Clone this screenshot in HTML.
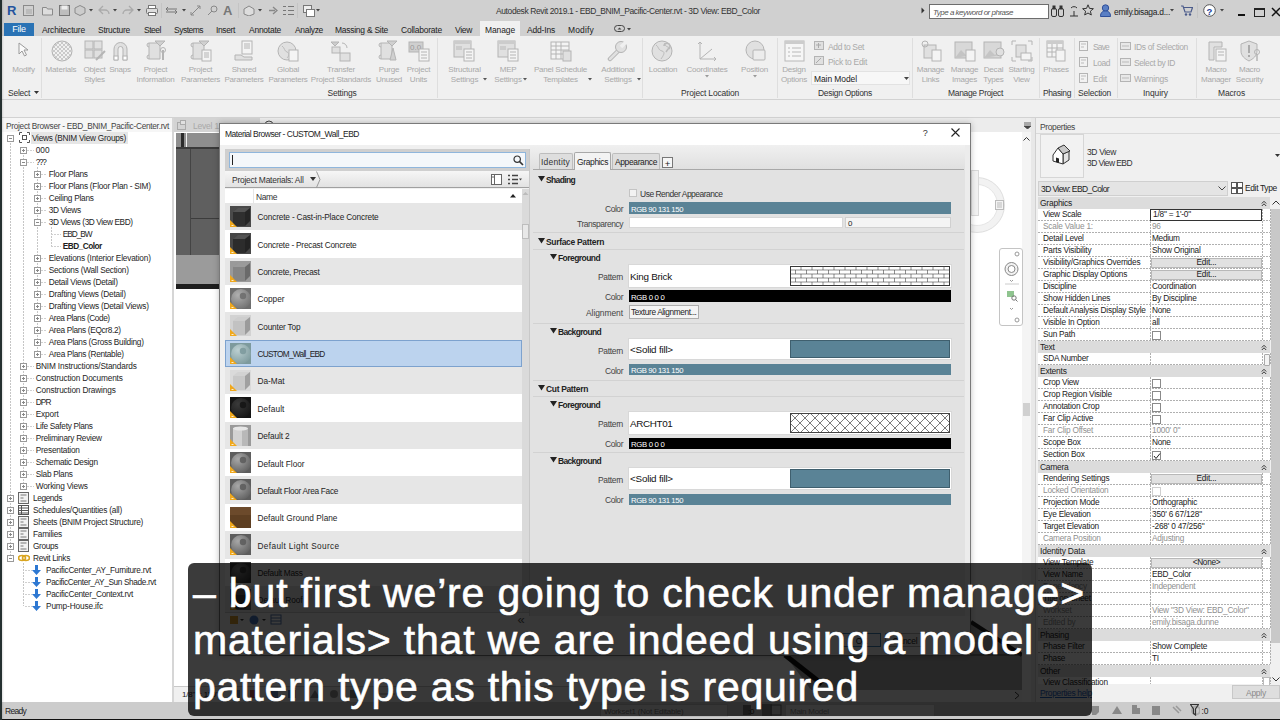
<!DOCTYPE html>
<html><head><meta charset="utf-8">
<style>
*{margin:0;padding:0;box-sizing:border-box}
html,body{width:1280px;height:720px;overflow:hidden;background:#f0f0f0;font-family:"Liberation Sans",sans-serif;font-size:8px;color:#222;position:relative}
.a{position:absolute}
.t{position:absolute;white-space:nowrap}
</style></head><body>
<div class="a" style="left:0px;top:0px;width:1280px;height:720px;background:#f0f0f0;"></div>
<div class="a" style="left:0px;top:0px;width:1280px;height:36px;background:#d0d0d0;"></div>
<div class="a" style="left:0px;top:36px;width:1280px;height:63px;background:#f0f0f0;"></div>
<div class="a" style="left:0px;top:99px;width:1280px;height:1px;background:#d2d2d2;"></div>
<div class="a" style="left:0px;top:100px;width:1280px;height:18px;background:#f0f0f0;"></div>
<div class="t" style="left:7.00px;top:2.40px;line-height:18px;font-size:13px;color:#24539e;font-weight:bold;">R</div>
<svg class="a" style="left:23px;top:5px;" width="11" height="11" viewBox="0 0 11 11"><rect x="0.5" y="0.5" width="10" height="10" fill="none" stroke="#8a8a8a"/><rect x="3" y="4" width="6" height="5" fill="#bbb"/></svg>
<svg class="a" style="left:42px;top:5px;" width="12" height="11" viewBox="0 0 12 11"><path d="M0.5 2.5h4l1 1.5h5v6h-10z" fill="#ddd" stroke="#8a8a8a"/></svg>
<svg class="a" style="left:59px;top:5px;" width="11" height="11" viewBox="0 0 11 11"><rect x="0.5" y="0.5" width="10" height="10" fill="#bdbdbd" stroke="#777"/><rect x="2.5" y="0.5" width="6" height="4" fill="#eee"/></svg>
<svg class="a" style="left:74px;top:5px;" width="12" height="11" viewBox="0 0 12 11"><path d="M1 3l5-2.5 5 2.5v5l-5 2.5-5-2.5z" fill="#ccc" stroke="#8a8a8a"/></svg>
<svg class="a" style="left:98px;top:5px;" width="12" height="11" viewBox="0 0 12 11"><path d="M5 1L1 5l4 4M1 5h6a4 4 0 0 1 4 4" fill="none" stroke="#aaa" stroke-width="1.3"/></svg>
<svg class="a" style="left:122px;top:5px;" width="12" height="11" viewBox="0 0 12 11"><path d="M7 1l4 4-4 4M11 5H5a4 4 0 0 0-4 4" fill="none" stroke="#aaa" stroke-width="1.3"/></svg>
<svg class="a" style="left:146px;top:5px;" width="12" height="11" viewBox="0 0 12 11"><rect x="0.5" y="3.5" width="11" height="5" rx="1" fill="#ddd" stroke="#777"/><rect x="2.5" y="0.5" width="7" height="3" fill="#fff" stroke="#777"/><rect x="2.5" y="7.5" width="7" height="3" fill="#fff" stroke="#777"/></svg>
<svg class="a" style="left:166px;top:5px;" width="12" height="11" viewBox="0 0 12 11"><path d="M0 4h11M0 7h11M2 2l-2 2 2 2M9 5l2 2-2 2" fill="none" stroke="#777"/></svg>
<svg class="a" style="left:190px;top:5px;" width="11" height="11" viewBox="0 0 11 11"><path d="M1 10L10 1M1 7v3h3M7 1h3v3" fill="none" stroke="#888"/></svg>
<svg class="a" style="left:207px;top:5px;" width="11" height="11" viewBox="0 0 11 11"><circle cx="7" cy="4" r="3" fill="none" stroke="#888"/><path d="M1 10l4-4" stroke="#888"/></svg>
<div class="t" style="left:223.00px;top:2.40px;line-height:18px;font-size:13px;color:#777;font-weight:bold;">A</div>
<svg class="a" style="left:243px;top:5px;" width="12" height="11" viewBox="0 0 12 11"><path d="M1 4l5-3 5 3v5l-5 2-5-2z" fill="#ddd" stroke="#888"/></svg>
<svg class="a" style="left:268px;top:5px;" width="11" height="11" viewBox="0 0 11 11"><path d="M1 5.5h6M5 2l4 3.5-4 3.5" fill="none" stroke="#888" stroke-width="1.3"/></svg>
<svg class="a" style="left:283px;top:5px;" width="11" height="11" viewBox="0 0 11 11"><path d="M0 1.5h3M5 1.5h6M0 5.5h3M5 5.5h6M0 9.5h3M5 9.5h6" stroke="#777"/></svg>
<svg class="a" style="left:303px;top:5px;" width="12" height="12" viewBox="0 0 12 12"><rect x="0.5" y="0.5" width="8" height="7" fill="#eee" stroke="#777"/><rect x="3.5" y="4.5" width="8" height="7" fill="#fff" stroke="#777"/></svg>
<svg class="a" style="left:89px;top:9px;" width="5" height="3" viewBox="0 0 5 3"><path d="M0 0h4l-2 2.5z" fill="#444"/></svg>
<svg class="a" style="left:113px;top:9px;" width="5" height="3" viewBox="0 0 5 3"><path d="M0 0h4l-2 2.5z" fill="#444"/></svg>
<svg class="a" style="left:137px;top:9px;" width="5" height="3" viewBox="0 0 5 3"><path d="M0 0h4l-2 2.5z" fill="#444"/></svg>
<svg class="a" style="left:182px;top:9px;" width="5" height="3" viewBox="0 0 5 3"><path d="M0 0h4l-2 2.5z" fill="#444"/></svg>
<svg class="a" style="left:258px;top:9px;" width="5" height="3" viewBox="0 0 5 3"><path d="M0 0h4l-2 2.5z" fill="#444"/></svg>
<svg class="a" style="left:316px;top:9px;" width="5" height="3" viewBox="0 0 5 3"><path d="M0 0h4l-2 2.5z" fill="#444"/></svg>
<div class="a" style="left:161px;top:3px;width:1px;height:15px;background:#c4c4c4;"></div>
<div class="a" style="left:238px;top:3px;width:1px;height:15px;background:#c4c4c4;"></div>
<div class="a" style="left:297px;top:3px;width:1px;height:15px;background:#c4c4c4;"></div>
<div class="t" style="left:496.00px;top:4.90px;line-height:12px;font-size:8.48px;color:#333;letter-spacing:-0.378px;">Autodesk Revit 2019.1 - EBD_BNIM_Pacific-Center.rvt - 3D View: EBD_Color</div>
<svg class="a" style="left:921px;top:7px;" width="5" height="7" viewBox="0 0 5 7"><path d="M0.5 0.5l3 3-3 3z" fill="#333"/></svg>
<div class="a" style="left:929px;top:4px;width:120px;height:15px;background:#fff;border:1px solid #6d6d6d;"></div>
<div class="t" style="left:933.00px;top:6.90px;line-height:11px;font-size:7.95px;color:#555;font-style:italic;letter-spacing:-0.466px;">Type a keyword or phrase</div>
<svg class="a" style="left:1051px;top:5px;" width="13" height="12" viewBox="0 0 13 12"><rect x="0.5" y="3.5" width="5" height="8" rx="1.5" fill="none" stroke="#333"/><rect x="7.5" y="3.5" width="5" height="8" rx="1.5" fill="none" stroke="#333"/><rect x="1.5" y="0.5" width="3" height="4" fill="#333"/><rect x="8.5" y="0.5" width="3" height="4" fill="#333"/></svg>
<svg class="a" style="left:1069px;top:5px;" width="10" height="12" viewBox="0 0 10 12"><path d="M1 11h8M5 11V6M2 3a4 4 0 0 1 6 0" fill="none" stroke="#333"/></svg>
<svg class="a" style="left:1082px;top:4px;" width="12" height="12" viewBox="0 0 12 12"><path d="M6 0.8l1.5 3.6 3.9.3-3 2.5.9 3.8L6 9 2.7 11l.9-3.8-3-2.5 3.9-.3z" fill="none" stroke="#333"/></svg>
<svg class="a" style="left:1100px;top:4px;" width="11" height="13" viewBox="0 0 11 13"><circle cx="5.5" cy="4" r="3.2" fill="#5a7fc4" stroke="#2e4f9a"/><path d="M0.5 12.5c0-4 2-5.5 5-5.5s5 1.5 5 5.5z" fill="#5a7fc4" stroke="#2e4f9a"/></svg>
<div class="t" style="left:1114.00px;top:5.90px;line-height:12px;font-size:8.48px;color:#222;letter-spacing:-0.268px;">emily.bisaga.d...</div>
<svg class="a" style="left:1170px;top:9px;" width="5" height="3" viewBox="0 0 5 3"><path d="M0 0h4l-2 2.5z" fill="#444"/></svg>
<svg class="a" style="left:1181px;top:5px;" width="12" height="12" viewBox="0 0 12 12"><path d="M0 1h2l2 6h6l1.5-4.5H3" fill="none" stroke="#4a5a8a" stroke-width="1.2"/><circle cx="5" cy="9.5" r="1.2" fill="#4a5a8a"/><circle cx="9" cy="9.5" r="1.2" fill="#4a5a8a"/></svg>
<div class="a" style="left:1197px;top:3px;width:1px;height:15px;background:#c4c4c4;"></div>
<svg class="a" style="left:1203px;top:4px;" width="13" height="13" viewBox="0 0 13 13"><circle cx="6.5" cy="6.5" r="5.8" fill="#fff" stroke="#555" stroke-width="1"/></svg>
<div class="t" style="left:1206.50px;top:5.20px;line-height:13px;font-size:9.54px;color:#1a3f9a;font-weight:bold;">?</div>
<svg class="a" style="left:1220px;top:9px;" width="5" height="3" viewBox="0 0 5 3"><path d="M0 0h4l-2 2.5z" fill="#444"/></svg>
<div class="a" style="left:1238px;top:14px;width:7px;height:2px;background:#111;"></div>
<div class="a" style="left:1254px;top:8px;width:11px;height:9px;border:1.5px solid #222;border-top-width:2px;"></div>
<svg class="a" style="left:1271px;top:7px;" width="10" height="10" viewBox="0 0 10 10"><path d="M1 1l8 8M9 1l-8 8" stroke="#111" stroke-width="1.5"/></svg>
<div class="a" style="left:4px;top:23px;width:30px;height:13px;background:#2a73b5;"></div>
<div class="t" style="left:12.15px;top:23.40px;line-height:13px;font-size:9.01px;color:#fff;letter-spacing:-0.201px;">File</div>
<div class="a" style="left:480px;top:21px;width:40px;height:15px;background:#f0f0f0;"></div>
<div class="t" style="left:42.00px;top:23.70px;line-height:12px;font-size:8.48px;color:#222;letter-spacing:-0.182px;">Architecture</div>
<div class="t" style="left:98.00px;top:23.70px;line-height:12px;font-size:8.48px;color:#222;letter-spacing:-0.262px;">Structure</div>
<div class="t" style="left:144.00px;top:23.70px;line-height:12px;font-size:8.48px;color:#222;letter-spacing:-0.461px;">Steel</div>
<div class="t" style="left:174.00px;top:23.70px;line-height:12px;font-size:8.48px;color:#222;letter-spacing:-0.496px;">Systems</div>
<div class="t" style="left:216.00px;top:23.70px;line-height:12px;font-size:8.48px;color:#222;letter-spacing:-0.363px;">Insert</div>
<div class="t" style="left:249.00px;top:23.70px;line-height:12px;font-size:8.48px;color:#222;letter-spacing:-0.238px;">Annotate</div>
<div class="t" style="left:295.00px;top:23.70px;line-height:12px;font-size:8.48px;color:#222;letter-spacing:-0.304px;">Analyze</div>
<div class="t" style="left:335.00px;top:23.70px;line-height:12px;font-size:8.48px;color:#222;letter-spacing:-0.249px;">Massing &amp; Site</div>
<div class="t" style="left:401.00px;top:23.70px;line-height:12px;font-size:8.48px;color:#222;letter-spacing:-0.210px;">Collaborate</div>
<div class="t" style="left:455.00px;top:23.70px;line-height:12px;font-size:8.48px;color:#222;letter-spacing:-0.301px;">View</div>
<div class="t" style="left:485.00px;top:23.70px;line-height:12px;font-size:8.48px;color:#222;letter-spacing:-0.101px;">Manage</div>
<div class="t" style="left:527.00px;top:23.70px;line-height:12px;font-size:8.48px;color:#222;letter-spacing:-0.169px;">Add-Ins</div>
<div class="t" style="left:568.00px;top:23.70px;line-height:12px;font-size:8.48px;color:#222;letter-spacing:0.176px;">Modify</div>
<svg class="a" style="left:614px;top:24px;" width="17" height="10" viewBox="0 0 17 10"><rect x="0.5" y="1.5" width="10" height="6" rx="3" fill="none" stroke="#444"/><path d="M3.5 5.5l2-2 2 2z" fill="#444"/><path d="M13 4h4l-2 2.5z" fill="#444"/></svg>
<div class="a" style="left:41px;top:38px;width:1px;height:60px;background:#dedede;"></div>
<div class="a" style="left:437px;top:38px;width:1px;height:60px;background:#dedede;"></div>
<div class="a" style="left:642px;top:38px;width:1px;height:60px;background:#dedede;"></div>
<div class="a" style="left:777px;top:38px;width:1px;height:60px;background:#dedede;"></div>
<div class="a" style="left:912px;top:38px;width:1px;height:60px;background:#dedede;"></div>
<div class="a" style="left:1039px;top:38px;width:1px;height:60px;background:#dedede;"></div>
<div class="a" style="left:1074px;top:38px;width:1px;height:60px;background:#dedede;"></div>
<div class="a" style="left:1117px;top:38px;width:1px;height:60px;background:#dedede;"></div>
<div class="a" style="left:1196px;top:38px;width:1px;height:60px;background:#dedede;"></div>
<svg class="a" style="left:18px;top:42px;" width="11" height="15" viewBox="0 0 11 15"><path d="M1 1v11l3-3 2.5 5 2-1-2.5-5h4z" fill="#fafafa" stroke="#9a9a9a"/></svg>
<div class="t" style="left:12.32px;top:64.40px;line-height:11px;font-size:8.06px;color:#a9a9a9;letter-spacing:-0.222px;">Modify</div>
<div class="t" style="left:8.00px;top:87.40px;line-height:12px;font-size:8.48px;color:#333;letter-spacing:-0.217px;">Select</div>
<svg class="a" style="left:34px;top:91px;" width="6" height="4" viewBox="0 0 6 4"><path d="M0 0h5l-2.5 3z" fill="#333"/></svg>
<svg class="a" style="left:51px;top:40px;" width="22" height="22" viewBox="0 0 22 22"><defs><pattern id="chk" width="4" height="4" patternUnits="userSpaceOnUse"><rect width="2" height="2" fill="#c9c9c9"/><rect x="2" y="2" width="2" height="2" fill="#c9c9c9"/></pattern></defs><circle cx="11" cy="11" r="10" fill="url(#chk)" stroke="#b4b4b4"/></svg>
<div class="t" style="left:45.60px;top:64.40px;line-height:11px;font-size:8.06px;color:#a9a9a9;letter-spacing:-0.204px;">Materials</div>
<svg class="a" style="left:84px;top:40px;" width="22" height="22" viewBox="0 0 22 22"><rect x="1" y="1" width="8" height="8" fill="#e0e0e0" stroke="#b4b4b4"/><rect x="10" y="1" width="8" height="8" fill="#e0e0e0" stroke="#b4b4b4"/><rect x="1" y="10" width="8" height="8" fill="#e0e0e0" stroke="#b4b4b4"/><rect x="10" y="10" width="8" height="8" fill="#e0e0e0" stroke="#b4b4b4"/><path d="M12 20l9-9" stroke="#b5b5b5" stroke-width="2"/></svg>
<div class="t" style="left:83.53px;top:64.40px;line-height:11px;font-size:8.06px;color:#a9a9a9;letter-spacing:-0.218px;">Object</div>
<div class="t" style="left:84.16px;top:74.40px;line-height:11px;font-size:8.06px;color:#a9a9a9;letter-spacing:-0.206px;">Styles</div>
<svg class="a" style="left:112px;top:40px;" width="17" height="22" viewBox="0 0 17 22"><path d="M2 20V9a6.5 6.5 0 0 1 13 0v11h-4V9a2.5 2.5 0 0 0-5 0v11z" fill="#e0e0e0" stroke="#b4b4b4"/><rect x="2" y="16" width="4" height="4" fill="#fff" stroke="#b4b4b4"/><rect x="11" y="16" width="4" height="4" fill="#fff" stroke="#b4b4b4"/></svg>
<div class="t" style="left:109.23px;top:64.40px;line-height:11px;font-size:8.06px;color:#a9a9a9;letter-spacing:-0.257px;">Snaps</div>
<svg class="a" style="left:146px;top:40px;" width="22" height="22" viewBox="0 0 22 22"><path d="M3 3h11v16H3z" fill="#e0e0e0" stroke="#b4b4b4"/><path d="M3 3a2 2 0 0 0 0 4M3 15a2 2 0 0 0 0 4" fill="none" stroke="#b4b4b4"/><path d="M9 1h10l-5 5z" fill="#d0d0d0" stroke="#b4b4b4"/><path d="M17 10v10" stroke="#b4b4b4" stroke-width="2"/><circle cx="17" cy="10" r="2.5" fill="none" stroke="#b4b4b4"/></svg>
<div class="t" style="left:143.68px;top:64.40px;line-height:11px;font-size:8.06px;color:#a9a9a9;letter-spacing:-0.201px;">Project</div>
<div class="t" style="left:136.51px;top:74.40px;line-height:11px;font-size:8.06px;color:#a9a9a9;letter-spacing:-0.206px;">Information</div>
<svg class="a" style="left:190px;top:40px;" width="22" height="22" viewBox="0 0 22 22"><path d="M3 3h11v16H3z" fill="#e0e0e0" stroke="#b4b4b4"/><path d="M3 3a2 2 0 0 0 0 4M3 15a2 2 0 0 0 0 4" fill="none" stroke="#b4b4b4"/><path d="M9 1h10l-5 5z" fill="#d0d0d0" stroke="#b4b4b4"/><rect x="12" y="10" width="9" height="11" fill="#f4f4f4" stroke="#b4b4b4"/><path d="M14 13h5M14 15h5M14 17h5" stroke="#b4b4b4"/></svg>
<div class="t" style="left:188.68px;top:64.40px;line-height:11px;font-size:8.06px;color:#a9a9a9;letter-spacing:-0.201px;">Project</div>
<div class="t" style="left:180.88px;top:74.40px;line-height:11px;font-size:8.06px;color:#a9a9a9;letter-spacing:-0.234px;">Parameters</div>
<svg class="a" style="left:234px;top:40px;" width="22" height="22" viewBox="0 0 22 22"><rect x="8" y="1" width="10" height="13" fill="#f4f4f4" stroke="#b4b4b4"/><path d="M10 4h6M10 6h6M10 8h6" stroke="#b4b4b4"/><path d="M1 15h6l3 2h8v3H1z" fill="#e0e0e0" stroke="#b4b4b4"/></svg>
<div class="t" style="left:231.76px;top:64.40px;line-height:11px;font-size:8.06px;color:#a9a9a9;letter-spacing:-0.244px;">Shared</div>
<div class="t" style="left:224.38px;top:74.40px;line-height:11px;font-size:8.06px;color:#a9a9a9;letter-spacing:-0.234px;">Parameters</div>
<svg class="a" style="left:277px;top:40px;" width="22" height="22" viewBox="0 0 22 22"><circle cx="10" cy="11" r="9" fill="#e0e0e0" stroke="#b4b4b4"/><path d="M5 6c3 2 2 5 5 6s2 4 0 6" fill="none" stroke="#bbb"/><rect x="12" y="10" width="9" height="11" fill="#f4f4f4" stroke="#b4b4b4"/></svg>
<div class="t" style="left:277.02px;top:64.40px;line-height:11px;font-size:8.06px;color:#a9a9a9;letter-spacing:-0.218px;">Global</div>
<div class="t" style="left:268.38px;top:74.40px;line-height:11px;font-size:8.06px;color:#a9a9a9;letter-spacing:-0.234px;">Parameters</div>
<svg class="a" style="left:330px;top:40px;" width="22" height="22" viewBox="0 0 22 22"><path d="M1 2h8l-4 4z" fill="#ccc" stroke="#b4b4b4"/><rect x="2" y="7" width="8" height="6" fill="#e0e0e0" stroke="#b4b4b4"/><rect x="10" y="13" width="10" height="8" fill="#e0e0e0" stroke="#b4b4b4"/><path d="M12 3a5 5 0 0 1 5 5" fill="none" stroke="#b4b4b4"/></svg>
<div class="t" style="left:327.00px;top:64.40px;line-height:11px;font-size:8.06px;color:#a9a9a9;letter-spacing:-0.209px;">Transfer</div>
<div class="t" style="left:310.82px;top:74.40px;line-height:11px;font-size:8.06px;color:#a9a9a9;letter-spacing:-0.212px;">Project Standards</div>
<svg class="a" style="left:378px;top:40px;" width="22" height="22" viewBox="0 0 22 22"><path d="M3 3h11v16H3z" fill="#e0e0e0" stroke="#b4b4b4"/><path d="M3 3a2 2 0 0 0 0 4M3 15a2 2 0 0 0 0 4" fill="none" stroke="#b4b4b4"/><path d="M9 1h10l-5 5z" fill="#d0d0d0" stroke="#b4b4b4"/><path d="M15 8l-3 12h6z" fill="#d0d0d0" stroke="#b4b4b4"/></svg>
<div class="t" style="left:378.87px;top:64.40px;line-height:11px;font-size:8.06px;color:#a9a9a9;letter-spacing:-0.242px;">Purge</div>
<div class="t" style="left:375.91px;top:74.40px;line-height:11px;font-size:8.06px;color:#a9a9a9;letter-spacing:-0.260px;">Unused</div>
<svg class="a" style="left:408px;top:40px;" width="22" height="22" viewBox="0 0 22 22"><rect x="1" y="2" width="14" height="10" fill="#cfcfcf" stroke="#b4b4b4"/><text x="2" y="10" font-size="8" fill="#999" font-family="Liberation Sans">0.0</text><rect x="11" y="9" width="10" height="12" fill="#f4f4f4" stroke="#b4b4b4"/><path d="M13 12h6M13 15h6M13 18h6" stroke="#b4b4b4"/></svg>
<div class="t" style="left:406.68px;top:64.40px;line-height:11px;font-size:8.06px;color:#a9a9a9;letter-spacing:-0.201px;">Project</div>
<div class="t" style="left:409.85px;top:74.40px;line-height:11px;font-size:8.06px;color:#a9a9a9;letter-spacing:-0.206px;">Units</div>
<svg class="a" style="left:453px;top:40px;" width="22" height="22" viewBox="0 0 22 22"><rect x="1" y="1" width="17" height="16" fill="#e0e0e0" stroke="#b4b4b4"/><rect x="1" y="1" width="17" height="3" fill="#ccc"/><rect x="3" y="6" width="6" height="4" fill="#ccc"/><rect x="11" y="9" width="10" height="12" fill="#f4f4f4" stroke="#b4b4b4"/><path d="M13 12h6M13 15h6M13 18h6" stroke="#b4b4b4"/></svg>
<div class="t" style="left:448.25px;top:64.40px;line-height:11px;font-size:8.06px;color:#a9a9a9;letter-spacing:-0.194px;">Structural</div>
<div class="t" style="left:450.78px;top:74.40px;line-height:11px;font-size:8.06px;color:#a9a9a9;letter-spacing:-0.205px;">Settings</div>
<svg class="a" style="left:497px;top:40px;" width="22" height="22" viewBox="0 0 22 22"><rect x="1" y="1" width="17" height="16" fill="#e0e0e0" stroke="#b4b4b4"/><rect x="1" y="1" width="17" height="3" fill="#ccc"/><rect x="3" y="6" width="6" height="4" fill="#ccc"/><rect x="11" y="9" width="10" height="12" fill="#f4f4f4" stroke="#b4b4b4"/><path d="M13 12h6M13 15h6M13 18h6" stroke="#b4b4b4"/></svg>
<div class="t" style="left:499.77px;top:64.40px;line-height:11px;font-size:8.06px;color:#a9a9a9;letter-spacing:-0.327px;">MEP</div>
<div class="t" style="left:494.28px;top:74.40px;line-height:11px;font-size:8.06px;color:#a9a9a9;letter-spacing:-0.205px;">Settings</div>
<svg class="a" style="left:550px;top:40px;" width="22" height="22" viewBox="0 0 22 22"><rect x="1" y="2" width="18" height="17" fill="#f4f4f4" stroke="#b4b4b4"/><path d="M1 6h18M1 10h18M1 14h18M6 2v17M11 2v17" stroke="#b4b4b4"/><rect x="13" y="11" width="8" height="10" fill="#e0e0e0" stroke="#b4b4b4"/></svg>
<div class="t" style="left:533.90px;top:64.40px;line-height:11px;font-size:8.06px;color:#a9a9a9;letter-spacing:-0.227px;">Panel Schedule</div>
<div class="t" style="left:543.20px;top:74.40px;line-height:11px;font-size:8.06px;color:#a9a9a9;letter-spacing:-0.229px;">Templates</div>
<svg class="a" style="left:483px;top:78px;" width="5" height="3" viewBox="0 0 5 3"><path d="M0 0h4l-2 2.5z" fill="#555"/></svg>
<svg class="a" style="left:523px;top:78px;" width="5" height="3" viewBox="0 0 5 3"><path d="M0 0h4l-2 2.5z" fill="#555"/></svg>
<svg class="a" style="left:588px;top:78px;" width="5" height="3" viewBox="0 0 5 3"><path d="M0 0h4l-2 2.5z" fill="#555"/></svg>
<svg class="a" style="left:637px;top:78px;" width="5" height="3" viewBox="0 0 5 3"><path d="M0 0h4l-2 2.5z" fill="#555"/></svg>
<svg class="a" style="left:606px;top:40px;" width="22" height="22" viewBox="0 0 22 22"><path d="M4 19l9-9" stroke="#b4b4b4" stroke-width="4.5" stroke-linecap="round"/><path d="M4 19l9-9" stroke="#e0e0e0" stroke-width="2.5" stroke-linecap="round"/><circle cx="15" cy="7" r="5.5" fill="#e0e0e0" stroke="#b4b4b4"/><path d="M15 7l6-6" stroke="#f0f0f0" stroke-width="3.5"/></svg>
<div class="t" style="left:601.32px;top:64.40px;line-height:11px;font-size:8.06px;color:#a9a9a9;letter-spacing:-0.199px;">Additional</div>
<div class="t" style="left:604.28px;top:74.40px;line-height:11px;font-size:8.06px;color:#a9a9a9;letter-spacing:-0.205px;">Settings</div>
<svg class="a" style="left:651px;top:40px;" width="22" height="22" viewBox="0 0 22 22"><circle cx="11" cy="11" r="10" fill="#e0e0e0" stroke="#b4b4b4"/><path d="M5 5c3 2 2 5 6 6s1 5-1 8M14 3c-1 3 3 4 5 5" fill="none" stroke="#bbb"/><path d="M13 6a3 3 0 1 1 4 3l-2 3" fill="none" stroke="#bbb" stroke-width="1.5"/></svg>
<div class="t" style="left:648.64px;top:64.40px;line-height:11px;font-size:8.06px;color:#a9a9a9;letter-spacing:-0.214px;">Location</div>
<svg class="a" style="left:697px;top:41px;" width="20" height="20" viewBox="0 0 20 20"><path d="M3 1v17h16M3 18L15 8" fill="none" stroke="#b4b4b4"/><path d="M1 3l2-2 2 2M17 16l2 2-2 2" fill="none" stroke="#b4b4b4"/></svg>
<div class="t" style="left:686.53px;top:64.40px;line-height:11px;font-size:8.06px;color:#a9a9a9;letter-spacing:-0.222px;">Coordinates</div>
<svg class="a" style="left:745px;top:40px;" width="22" height="22" viewBox="0 0 22 22"><circle cx="10" cy="10" r="9" fill="#e0e0e0" stroke="#b4b4b4"/><rect x="8" y="10" width="12" height="10" rx="1" fill="#ececec" stroke="#b4b4b4"/></svg>
<div class="t" style="left:740.99px;top:64.40px;line-height:11px;font-size:8.06px;color:#a9a9a9;letter-spacing:-0.202px;">Position</div>
<svg class="a" style="left:705px;top:75px;" width="5" height="3" viewBox="0 0 5 3"><path d="M0 0h4l-2 2.5z" fill="#999"/></svg>
<svg class="a" style="left:753px;top:75px;" width="5" height="3" viewBox="0 0 5 3"><path d="M0 0h4l-2 2.5z" fill="#999"/></svg>
<div class="t" style="left:681.00px;top:87.40px;line-height:12px;font-size:8.48px;color:#333;letter-spacing:-0.171px;">Project Location</div>
<div class="t" style="left:327.50px;top:87.40px;line-height:12px;font-size:8.48px;color:#333;letter-spacing:-0.200px;">Settings</div>
<svg class="a" style="left:784px;top:40px;" width="21" height="22" viewBox="0 0 21 22"><rect x="1" y="1" width="19" height="20" fill="#f6f6f6" stroke="#b8b8b8"/><rect x="1" y="1" width="19" height="3" fill="#ccc"/><path d="M4 8h2M8 8h9M4 12h2M8 12h9M4 16h2M8 16h9" stroke="#b8b8b8"/></svg>
<div class="t" style="left:782.18px;top:64.40px;line-height:11px;font-size:8.06px;color:#a9a9a9;letter-spacing:-0.235px;">Design</div>
<div class="t" style="left:780.91px;top:74.40px;line-height:11px;font-size:8.06px;color:#a9a9a9;letter-spacing:-0.223px;">Options</div>
<svg class="a" style="left:814px;top:41px;" width="10" height="9" viewBox="0 0 10 9"><rect x="0.5" y="0.5" width="9" height="8" fill="#e0e0e0" stroke="#b4b4b4"/><path d="M2 4h5M4.5 2v5" stroke="#aaa"/></svg>
<div class="t" style="left:828.00px;top:40.90px;line-height:12px;font-size:8.48px;color:#a9a9a9;letter-spacing:-0.355px;">Add to Set</div>
<svg class="a" style="left:814px;top:56px;" width="10" height="9" viewBox="0 0 10 9"><rect x="0.5" y="0.5" width="9" height="8" fill="#e0e0e0" stroke="#b4b4b4"/><path d="M2 7l5-5" stroke="#aaa"/></svg>
<div class="t" style="left:828.00px;top:56.40px;line-height:12px;font-size:8.48px;color:#a9a9a9;letter-spacing:-0.280px;">Pick to Edit</div>
<div class="a" style="left:811px;top:71px;width:99px;height:14px;background:#f7f7f7;border:1px solid #e2e2e2;"></div>
<div class="t" style="left:814.00px;top:72.90px;line-height:12px;font-size:8.48px;color:#222;letter-spacing:-0.077px;">Main Model</div>
<svg class="a" style="left:904px;top:77px;" width="6" height="4" viewBox="0 0 6 4"><path d="M0 0h5l-2.5 3z" fill="#444"/></svg>
<div class="t" style="left:818.00px;top:87.40px;line-height:12px;font-size:8.48px;color:#333;letter-spacing:-0.279px;">Design Options</div>
<svg class="a" style="left:920px;top:40px;" width="22" height="22" viewBox="0 0 22 22"><rect x="4" y="5" width="12" height="13" fill="#e0e0e0" stroke="#b4b4b4"/><circle cx="5" cy="4" r="3" fill="none" stroke="#b4b4b4"/><rect x="12" y="10" width="9" height="11" fill="#f4f4f4" stroke="#b4b4b4"/></svg>
<div class="t" style="left:916.78px;top:64.40px;line-height:11px;font-size:8.06px;color:#a9a9a9;letter-spacing:-0.273px;">Manage</div>
<div class="t" style="left:921.64px;top:74.40px;line-height:11px;font-size:8.06px;color:#a9a9a9;letter-spacing:-0.212px;">Links</div>
<svg class="a" style="left:954px;top:40px;" width="22" height="22" viewBox="0 0 22 22"><rect x="1" y="2" width="17" height="16" fill="#d8d8d8" stroke="#b4b4b4"/><path d="M1 18l6-8 5 5 3-3 3 3" fill="#c4c4c4"/><rect x="12" y="10" width="9" height="11" fill="#f4f4f4" stroke="#b4b4b4"/></svg>
<div class="t" style="left:950.78px;top:64.40px;line-height:11px;font-size:8.06px;color:#a9a9a9;letter-spacing:-0.273px;">Manage</div>
<div class="t" style="left:952.05px;top:74.40px;line-height:11px;font-size:8.06px;color:#a9a9a9;letter-spacing:-0.248px;">Images</div>
<svg class="a" style="left:983px;top:40px;" width="22" height="22" viewBox="0 0 22 22"><rect x="1" y="2" width="17" height="16" fill="#d8d8d8" stroke="#b4b4b4"/><path d="M1 18l6-8 5 5 3-3 3 3" fill="#c4c4c4"/><circle cx="17" cy="12" r="4" fill="#e0e0e0" stroke="#b4b4b4"/></svg>
<div class="t" style="left:983.79px;top:64.40px;line-height:11px;font-size:8.06px;color:#a9a9a9;letter-spacing:-0.232px;">Decal</div>
<div class="t" style="left:983.37px;top:74.40px;line-height:11px;font-size:8.06px;color:#a9a9a9;letter-spacing:-0.242px;">Types</div>
<svg class="a" style="left:1011px;top:40px;" width="22" height="22" viewBox="0 0 22 22"><path d="M1 5V1h4M17 1h4v4M1 17v4h4M21 17v4h-4" fill="none" stroke="#b4b4b4"/><rect x="5" y="5" width="10" height="12" fill="#e0e0e0" stroke="#b4b4b4"/><rect x="10" y="13" width="10" height="7" fill="#f4f4f4" stroke="#b4b4b4"/></svg>
<div class="t" style="left:1008.41px;top:64.40px;line-height:11px;font-size:8.06px;color:#a9a9a9;letter-spacing:-0.195px;">Starting</div>
<div class="t" style="left:1013.34px;top:74.40px;line-height:11px;font-size:8.06px;color:#a9a9a9;letter-spacing:-0.243px;">View</div>
<div class="t" style="left:948.00px;top:87.40px;line-height:12px;font-size:8.48px;color:#333;letter-spacing:-0.308px;">Manage Project</div>
<svg class="a" style="left:1046px;top:40px;" width="20" height="22" viewBox="0 0 20 22"><rect x="1" y="1" width="16" height="16" fill="#f4f4f4" stroke="#b4b4b4"/><rect x="1" y="1" width="16" height="3" fill="#ccc"/><path d="M1 8h16M1 12h16M6 4v13M11 4v13" stroke="#b4b4b4"/><rect x="10" y="10" width="9" height="11" fill="#f4f4f4" stroke="#b4b4b4"/></svg>
<div class="t" style="left:1043.34px;top:64.40px;line-height:11px;font-size:8.06px;color:#a9a9a9;letter-spacing:-0.252px;">Phases</div>
<div class="t" style="left:1043.00px;top:87.40px;line-height:12px;font-size:8.48px;color:#333;letter-spacing:-0.372px;">Phasing</div>
<svg class="a" style="left:1079px;top:41px;" width="9" height="10" viewBox="0 0 9 10"><rect x="0.5" y="0.5" width="8" height="9" fill="#f2f2f2" stroke="#b4b4b4"/><path d="M2 3h5M2 6h3" stroke="#bbb"/></svg>
<div class="t" style="left:1093.00px;top:40.90px;line-height:12px;font-size:8.48px;color:#a9a9a9;letter-spacing:-0.826px;">Save</div>
<svg class="a" style="left:1079px;top:57px;" width="9" height="10" viewBox="0 0 9 10"><rect x="0.5" y="0.5" width="8" height="9" fill="#f2f2f2" stroke="#b4b4b4"/><path d="M2 3h5M2 6h3" stroke="#bbb"/></svg>
<div class="t" style="left:1093.00px;top:56.90px;line-height:12px;font-size:8.48px;color:#a9a9a9;letter-spacing:-0.460px;">Load</div>
<svg class="a" style="left:1079px;top:73px;" width="9" height="10" viewBox="0 0 9 10"><rect x="0.5" y="0.5" width="8" height="9" fill="#f2f2f2" stroke="#b4b4b4"/><path d="M2 3h5M2 6h3" stroke="#bbb"/></svg>
<div class="t" style="left:1093.00px;top:72.90px;line-height:12px;font-size:8.48px;color:#a9a9a9;letter-spacing:-0.148px;">Edit</div>
<div class="t" style="left:1078.00px;top:87.40px;line-height:12px;font-size:8.48px;color:#333;letter-spacing:-0.204px;">Selection</div>
<svg class="a" style="left:1120px;top:41px;" width="11" height="10" viewBox="0 0 11 10"><rect x="0.5" y="1.5" width="10" height="7" fill="#e8e8e8" stroke="#b4b4b4"/><path d="M2 5h7" stroke="#bbb"/></svg>
<div class="t" style="left:1134.00px;top:40.90px;line-height:12px;font-size:8.48px;color:#a9a9a9;letter-spacing:-0.333px;">IDs of  Selection</div>
<svg class="a" style="left:1120px;top:57px;" width="11" height="10" viewBox="0 0 11 10"><rect x="0.5" y="1.5" width="10" height="7" fill="#e8e8e8" stroke="#b4b4b4"/><path d="M2 5h7" stroke="#bbb"/></svg>
<div class="t" style="left:1134.00px;top:56.90px;line-height:12px;font-size:8.48px;color:#a9a9a9;letter-spacing:-0.385px;">Select  by ID</div>
<svg class="a" style="left:1120px;top:73px;" width="11" height="10" viewBox="0 0 11 10"><rect x="0.5" y="1.5" width="10" height="7" fill="#e8e8e8" stroke="#b4b4b4"/><path d="M2 5h7" stroke="#bbb"/></svg>
<div class="t" style="left:1134.00px;top:72.90px;line-height:12px;font-size:8.48px;color:#a9a9a9;letter-spacing:-0.182px;">Warnings</div>
<div class="t" style="left:1143.00px;top:87.40px;line-height:12px;font-size:8.48px;color:#333;letter-spacing:-0.060px;">Inquiry</div>
<svg class="a" style="left:1206px;top:40px;" width="21" height="22" viewBox="0 0 21 22"><path d="M3 2h13v5H8v13H3z" fill="#e0e0e0" stroke="#b4b4b4"/><rect x="10" y="9" width="10" height="12" fill="#f4f4f4" stroke="#b4b4b4"/><path d="M12 12h6M12 15h6" stroke="#b4b4b4"/></svg>
<div class="t" style="left:1205.45px;top:64.40px;line-height:11px;font-size:8.06px;color:#a9a9a9;letter-spacing:-0.252px;">Macro</div>
<div class="t" style="left:1201.01px;top:74.40px;line-height:11px;font-size:8.06px;color:#a9a9a9;letter-spacing:-0.255px;">Manager</div>
<svg class="a" style="left:1240px;top:40px;" width="21" height="22" viewBox="0 0 21 22"><path d="M9 1l8 3v7c0 5-4 8-8 10-4-2-8-5-8-10V4z" fill="#e0e0e0" stroke="#b4b4b4"/><path d="M9 5v8M9 15v2" stroke="#aaa" stroke-width="2"/><circle cx="17" cy="12" r="2.5" fill="none" stroke="#b4b4b4"/><path d="M17 14v7" stroke="#b4b4b4" stroke-width="1.5"/></svg>
<div class="t" style="left:1238.95px;top:64.40px;line-height:11px;font-size:8.06px;color:#a9a9a9;letter-spacing:-0.252px;">Macro</div>
<div class="t" style="left:1235.78px;top:74.40px;line-height:11px;font-size:8.06px;color:#a9a9a9;letter-spacing:-0.205px;">Security</div>
<div class="t" style="left:1218.00px;top:87.40px;line-height:12px;font-size:8.48px;color:#333;letter-spacing:-0.127px;">Macros</div>
<div class="a" style="left:0px;top:117px;width:1280px;height:1px;background:#d2d2d2;"></div>
<div class="a" style="left:2px;top:118px;width:171px;height:14px;background:#f6f6f6;"></div>
<div class="t" style="left:6.00px;top:120.90px;line-height:12px;font-size:8.27px;color:#444;letter-spacing:-0.277px;">Project Browser - EBD_BNIM_Pacific-Center.rvt</div>
<div class="a" style="left:2px;top:132px;width:171px;height:570px;background:#ffffff;"></div>
<div class="a" style="left:172px;top:118px;width:2px;height:584px;background:#d6d6d6;"></div>
<div class="a" style="left:10px;top:143px;width:1px;height:413px;background:repeating-linear-gradient(to bottom,#c6c6c6 0 2px,transparent 2px 3px);"></div>
<div class="a" style="left:23px;top:155px;width:1px;height:331px;background:repeating-linear-gradient(to bottom,#c6c6c6 0 2px,transparent 2px 3px);"></div>
<div class="a" style="left:37px;top:167px;width:1px;height:187px;background:repeating-linear-gradient(to bottom,#c6c6c6 0 2px,transparent 2px 3px);"></div>
<div class="a" style="left:51px;top:227px;width:1px;height:19px;background:repeating-linear-gradient(to bottom,#c6c6c6 0 2px,transparent 2px 3px);"></div>
<div class="a" style="left:23px;top:563px;width:1px;height:43px;background:repeating-linear-gradient(to bottom,#c6c6c6 0 2px,transparent 2px 3px);"></div>
<div class="a" style="left:31px;top:132px;width:97px;height:12px;background:#e6e6e6;"></div>
<svg class="a" style="left:7px;top:135px;" width="7" height="7" viewBox="0 0 7 7"><rect x="0.5" y="0.5" width="6" height="6" fill="#fff" stroke="#9a9a9a"/><path d="M2 3.5h3" stroke="#888"/></svg>
<svg class="a" style="left:19px;top:132px;" width="11" height="11" viewBox="0 0 11 11"><path d="M0.5 3V0.5H3M8 0.5h2.5V3M0.5 8v2.5H3M8 10.5h2.5V8" fill="none" stroke="#555"/><rect x="3.5" y="3.5" width="4" height="4" fill="none" stroke="#555"/></svg>
<div class="t" style="left:32.00px;top:132.90px;line-height:12px;font-size:8.27px;color:#1e1e1e;letter-spacing:-0.243px;">Views (BNIM View Groups)</div>
<svg class="a" style="left:20px;top:147px;" width="7" height="7" viewBox="0 0 7 7"><rect x="0.5" y="0.5" width="6" height="6" fill="#fff" stroke="#9a9a9a"/><path d="M2 3.5h3" stroke="#888"/><path d="M3.5 2v3" stroke="#888"/></svg>
<div class="a" style="left:27px;top:150px;width:7px;height:1px;background:repeating-linear-gradient(to right,#d0d0d0 0 2px,transparent 2px 3px);"></div>
<div class="t" style="left:35.70px;top:144.90px;line-height:12px;font-size:8.27px;color:#1e1e1e;letter-spacing:0.070px;">000</div>
<svg class="a" style="left:20px;top:159px;" width="7" height="7" viewBox="0 0 7 7"><rect x="0.5" y="0.5" width="6" height="6" fill="#fff" stroke="#9a9a9a"/><path d="M2 3.5h3" stroke="#888"/></svg>
<div class="a" style="left:27px;top:162px;width:7px;height:1px;background:repeating-linear-gradient(to right,#d0d0d0 0 2px,transparent 2px 3px);"></div>
<div class="t" style="left:35.70px;top:156.90px;line-height:12px;font-size:8.27px;color:#1e1e1e;letter-spacing:-1.264px;">???</div>
<svg class="a" style="left:34px;top:171px;" width="7" height="7" viewBox="0 0 7 7"><rect x="0.5" y="0.5" width="6" height="6" fill="#fff" stroke="#9a9a9a"/><path d="M2 3.5h3" stroke="#888"/><path d="M3.5 2v3" stroke="#888"/></svg>
<div class="a" style="left:41px;top:174px;width:6px;height:1px;background:repeating-linear-gradient(to right,#d0d0d0 0 2px,transparent 2px 3px);"></div>
<div class="t" style="left:48.70px;top:168.90px;line-height:12px;font-size:8.27px;color:#1e1e1e;letter-spacing:-0.255px;">Floor Plans</div>
<svg class="a" style="left:34px;top:183px;" width="7" height="7" viewBox="0 0 7 7"><rect x="0.5" y="0.5" width="6" height="6" fill="#fff" stroke="#9a9a9a"/><path d="M2 3.5h3" stroke="#888"/><path d="M3.5 2v3" stroke="#888"/></svg>
<div class="a" style="left:41px;top:186px;width:6px;height:1px;background:repeating-linear-gradient(to right,#d0d0d0 0 2px,transparent 2px 3px);"></div>
<div class="t" style="left:48.70px;top:180.90px;line-height:12px;font-size:8.27px;color:#1e1e1e;letter-spacing:-0.244px;">Floor Plans (Floor Plan - SIM)</div>
<svg class="a" style="left:34px;top:195px;" width="7" height="7" viewBox="0 0 7 7"><rect x="0.5" y="0.5" width="6" height="6" fill="#fff" stroke="#9a9a9a"/><path d="M2 3.5h3" stroke="#888"/><path d="M3.5 2v3" stroke="#888"/></svg>
<div class="a" style="left:41px;top:198px;width:6px;height:1px;background:repeating-linear-gradient(to right,#d0d0d0 0 2px,transparent 2px 3px);"></div>
<div class="t" style="left:48.70px;top:192.90px;line-height:12px;font-size:8.27px;color:#1e1e1e;letter-spacing:-0.249px;">Ceiling Plans</div>
<svg class="a" style="left:34px;top:207px;" width="7" height="7" viewBox="0 0 7 7"><rect x="0.5" y="0.5" width="6" height="6" fill="#fff" stroke="#9a9a9a"/><path d="M2 3.5h3" stroke="#888"/><path d="M3.5 2v3" stroke="#888"/></svg>
<div class="a" style="left:41px;top:210px;width:6px;height:1px;background:repeating-linear-gradient(to right,#d0d0d0 0 2px,transparent 2px 3px);"></div>
<div class="t" style="left:48.70px;top:204.90px;line-height:12px;font-size:8.27px;color:#1e1e1e;letter-spacing:-0.345px;">3D Views</div>
<svg class="a" style="left:34px;top:219px;" width="7" height="7" viewBox="0 0 7 7"><rect x="0.5" y="0.5" width="6" height="6" fill="#fff" stroke="#9a9a9a"/><path d="M2 3.5h3" stroke="#888"/></svg>
<div class="a" style="left:41px;top:222px;width:6px;height:1px;background:repeating-linear-gradient(to right,#d0d0d0 0 2px,transparent 2px 3px);"></div>
<div class="t" style="left:48.70px;top:216.90px;line-height:12px;font-size:8.27px;color:#1e1e1e;letter-spacing:-0.386px;">3D Views (3D View EBD)</div>
<div class="a" style="left:51px;top:234px;width:10px;height:1px;background:repeating-linear-gradient(to right,#d0d0d0 0 2px,transparent 2px 3px);"></div>
<div class="t" style="left:62.70px;top:228.90px;line-height:12px;font-size:8.27px;color:#1e1e1e;letter-spacing:-0.984px;">EBD_BW</div>
<div class="a" style="left:51px;top:246px;width:10px;height:1px;background:repeating-linear-gradient(to right,#d0d0d0 0 2px,transparent 2px 3px);"></div>
<div class="t" style="left:62.70px;top:240.90px;line-height:12px;font-size:8.27px;color:#1e1e1e;font-weight:bold;letter-spacing:-0.514px;">EBD_Color</div>
<svg class="a" style="left:34px;top:255px;" width="7" height="7" viewBox="0 0 7 7"><rect x="0.5" y="0.5" width="6" height="6" fill="#fff" stroke="#9a9a9a"/><path d="M2 3.5h3" stroke="#888"/><path d="M3.5 2v3" stroke="#888"/></svg>
<div class="a" style="left:41px;top:258px;width:6px;height:1px;background:repeating-linear-gradient(to right,#d0d0d0 0 2px,transparent 2px 3px);"></div>
<div class="t" style="left:48.70px;top:252.90px;line-height:12px;font-size:8.27px;color:#1e1e1e;letter-spacing:-0.192px;">Elevations (Interior Elevation)</div>
<svg class="a" style="left:34px;top:267px;" width="7" height="7" viewBox="0 0 7 7"><rect x="0.5" y="0.5" width="6" height="6" fill="#fff" stroke="#9a9a9a"/><path d="M2 3.5h3" stroke="#888"/><path d="M3.5 2v3" stroke="#888"/></svg>
<div class="a" style="left:41px;top:270px;width:6px;height:1px;background:repeating-linear-gradient(to right,#d0d0d0 0 2px,transparent 2px 3px);"></div>
<div class="t" style="left:48.70px;top:264.90px;line-height:12px;font-size:8.27px;color:#1e1e1e;letter-spacing:-0.223px;">Sections (Wall Section)</div>
<svg class="a" style="left:34px;top:279px;" width="7" height="7" viewBox="0 0 7 7"><rect x="0.5" y="0.5" width="6" height="6" fill="#fff" stroke="#9a9a9a"/><path d="M2 3.5h3" stroke="#888"/><path d="M3.5 2v3" stroke="#888"/></svg>
<div class="a" style="left:41px;top:282px;width:6px;height:1px;background:repeating-linear-gradient(to right,#d0d0d0 0 2px,transparent 2px 3px);"></div>
<div class="t" style="left:48.70px;top:276.90px;line-height:12px;font-size:8.27px;color:#1e1e1e;letter-spacing:-0.251px;">Detail Views (Detail)</div>
<svg class="a" style="left:34px;top:291px;" width="7" height="7" viewBox="0 0 7 7"><rect x="0.5" y="0.5" width="6" height="6" fill="#fff" stroke="#9a9a9a"/><path d="M2 3.5h3" stroke="#888"/><path d="M3.5 2v3" stroke="#888"/></svg>
<div class="a" style="left:41px;top:294px;width:6px;height:1px;background:repeating-linear-gradient(to right,#d0d0d0 0 2px,transparent 2px 3px);"></div>
<div class="t" style="left:48.70px;top:288.90px;line-height:12px;font-size:8.27px;color:#1e1e1e;letter-spacing:-0.220px;">Drafting Views (Detail)</div>
<svg class="a" style="left:34px;top:303px;" width="7" height="7" viewBox="0 0 7 7"><rect x="0.5" y="0.5" width="6" height="6" fill="#fff" stroke="#9a9a9a"/><path d="M2 3.5h3" stroke="#888"/><path d="M3.5 2v3" stroke="#888"/></svg>
<div class="a" style="left:41px;top:306px;width:6px;height:1px;background:repeating-linear-gradient(to right,#d0d0d0 0 2px,transparent 2px 3px);"></div>
<div class="t" style="left:48.70px;top:300.90px;line-height:12px;font-size:8.27px;color:#1e1e1e;letter-spacing:-0.216px;">Drafting Views (Detail Views)</div>
<svg class="a" style="left:34px;top:315px;" width="7" height="7" viewBox="0 0 7 7"><rect x="0.5" y="0.5" width="6" height="6" fill="#fff" stroke="#9a9a9a"/><path d="M2 3.5h3" stroke="#888"/><path d="M3.5 2v3" stroke="#888"/></svg>
<div class="a" style="left:41px;top:318px;width:6px;height:1px;background:repeating-linear-gradient(to right,#d0d0d0 0 2px,transparent 2px 3px);"></div>
<div class="t" style="left:48.70px;top:312.90px;line-height:12px;font-size:8.27px;color:#1e1e1e;letter-spacing:-0.411px;">Area Plans (Code)</div>
<svg class="a" style="left:34px;top:327px;" width="7" height="7" viewBox="0 0 7 7"><rect x="0.5" y="0.5" width="6" height="6" fill="#fff" stroke="#9a9a9a"/><path d="M2 3.5h3" stroke="#888"/><path d="M3.5 2v3" stroke="#888"/></svg>
<div class="a" style="left:41px;top:330px;width:6px;height:1px;background:repeating-linear-gradient(to right,#d0d0d0 0 2px,transparent 2px 3px);"></div>
<div class="t" style="left:48.70px;top:324.90px;line-height:12px;font-size:8.27px;color:#1e1e1e;letter-spacing:-0.328px;">Area Plans (EQcr8.2)</div>
<svg class="a" style="left:34px;top:339px;" width="7" height="7" viewBox="0 0 7 7"><rect x="0.5" y="0.5" width="6" height="6" fill="#fff" stroke="#9a9a9a"/><path d="M2 3.5h3" stroke="#888"/><path d="M3.5 2v3" stroke="#888"/></svg>
<div class="a" style="left:41px;top:342px;width:6px;height:1px;background:repeating-linear-gradient(to right,#d0d0d0 0 2px,transparent 2px 3px);"></div>
<div class="t" style="left:48.70px;top:336.90px;line-height:12px;font-size:8.27px;color:#1e1e1e;letter-spacing:-0.259px;">Area Plans (Gross Building)</div>
<svg class="a" style="left:34px;top:351px;" width="7" height="7" viewBox="0 0 7 7"><rect x="0.5" y="0.5" width="6" height="6" fill="#fff" stroke="#9a9a9a"/><path d="M2 3.5h3" stroke="#888"/><path d="M3.5 2v3" stroke="#888"/></svg>
<div class="a" style="left:41px;top:354px;width:6px;height:1px;background:repeating-linear-gradient(to right,#d0d0d0 0 2px,transparent 2px 3px);"></div>
<div class="t" style="left:48.70px;top:348.90px;line-height:12px;font-size:8.27px;color:#1e1e1e;letter-spacing:-0.301px;">Area Plans (Rentable)</div>
<svg class="a" style="left:20px;top:363px;" width="7" height="7" viewBox="0 0 7 7"><rect x="0.5" y="0.5" width="6" height="6" fill="#fff" stroke="#9a9a9a"/><path d="M2 3.5h3" stroke="#888"/><path d="M3.5 2v3" stroke="#888"/></svg>
<div class="a" style="left:27px;top:366px;width:7px;height:1px;background:repeating-linear-gradient(to right,#d0d0d0 0 2px,transparent 2px 3px);"></div>
<div class="t" style="left:35.70px;top:360.90px;line-height:12px;font-size:8.27px;color:#1e1e1e;letter-spacing:-0.156px;">BNIM Instructions/Standards</div>
<svg class="a" style="left:20px;top:375px;" width="7" height="7" viewBox="0 0 7 7"><rect x="0.5" y="0.5" width="6" height="6" fill="#fff" stroke="#9a9a9a"/><path d="M2 3.5h3" stroke="#888"/><path d="M3.5 2v3" stroke="#888"/></svg>
<div class="a" style="left:27px;top:378px;width:7px;height:1px;background:repeating-linear-gradient(to right,#d0d0d0 0 2px,transparent 2px 3px);"></div>
<div class="t" style="left:35.70px;top:372.90px;line-height:12px;font-size:8.27px;color:#1e1e1e;letter-spacing:-0.159px;">Construction Documents</div>
<svg class="a" style="left:20px;top:387px;" width="7" height="7" viewBox="0 0 7 7"><rect x="0.5" y="0.5" width="6" height="6" fill="#fff" stroke="#9a9a9a"/><path d="M2 3.5h3" stroke="#888"/><path d="M3.5 2v3" stroke="#888"/></svg>
<div class="a" style="left:27px;top:390px;width:7px;height:1px;background:repeating-linear-gradient(to right,#d0d0d0 0 2px,transparent 2px 3px);"></div>
<div class="t" style="left:35.70px;top:384.90px;line-height:12px;font-size:8.27px;color:#1e1e1e;letter-spacing:-0.150px;">Construction Drawings</div>
<svg class="a" style="left:20px;top:399px;" width="7" height="7" viewBox="0 0 7 7"><rect x="0.5" y="0.5" width="6" height="6" fill="#fff" stroke="#9a9a9a"/><path d="M2 3.5h3" stroke="#888"/><path d="M3.5 2v3" stroke="#888"/></svg>
<div class="a" style="left:27px;top:402px;width:7px;height:1px;background:repeating-linear-gradient(to right,#d0d0d0 0 2px,transparent 2px 3px);"></div>
<div class="t" style="left:35.70px;top:396.90px;line-height:12px;font-size:8.27px;color:#1e1e1e;letter-spacing:-0.817px;">DPR</div>
<svg class="a" style="left:20px;top:411px;" width="7" height="7" viewBox="0 0 7 7"><rect x="0.5" y="0.5" width="6" height="6" fill="#fff" stroke="#9a9a9a"/><path d="M2 3.5h3" stroke="#888"/><path d="M3.5 2v3" stroke="#888"/></svg>
<div class="a" style="left:27px;top:414px;width:7px;height:1px;background:repeating-linear-gradient(to right,#d0d0d0 0 2px,transparent 2px 3px);"></div>
<div class="t" style="left:35.70px;top:408.90px;line-height:12px;font-size:8.27px;color:#1e1e1e;letter-spacing:-0.148px;">Export</div>
<svg class="a" style="left:20px;top:423px;" width="7" height="7" viewBox="0 0 7 7"><rect x="0.5" y="0.5" width="6" height="6" fill="#fff" stroke="#9a9a9a"/><path d="M2 3.5h3" stroke="#888"/><path d="M3.5 2v3" stroke="#888"/></svg>
<div class="a" style="left:27px;top:426px;width:7px;height:1px;background:repeating-linear-gradient(to right,#d0d0d0 0 2px,transparent 2px 3px);"></div>
<div class="t" style="left:35.70px;top:420.90px;line-height:12px;font-size:8.27px;color:#1e1e1e;letter-spacing:-0.296px;">Life Safety Plans</div>
<svg class="a" style="left:20px;top:435px;" width="7" height="7" viewBox="0 0 7 7"><rect x="0.5" y="0.5" width="6" height="6" fill="#fff" stroke="#9a9a9a"/><path d="M2 3.5h3" stroke="#888"/><path d="M3.5 2v3" stroke="#888"/></svg>
<div class="a" style="left:27px;top:438px;width:7px;height:1px;background:repeating-linear-gradient(to right,#d0d0d0 0 2px,transparent 2px 3px);"></div>
<div class="t" style="left:35.70px;top:432.90px;line-height:12px;font-size:8.27px;color:#1e1e1e;letter-spacing:-0.263px;">Preliminary Review</div>
<svg class="a" style="left:20px;top:447px;" width="7" height="7" viewBox="0 0 7 7"><rect x="0.5" y="0.5" width="6" height="6" fill="#fff" stroke="#9a9a9a"/><path d="M2 3.5h3" stroke="#888"/><path d="M3.5 2v3" stroke="#888"/></svg>
<div class="a" style="left:27px;top:450px;width:7px;height:1px;background:repeating-linear-gradient(to right,#d0d0d0 0 2px,transparent 2px 3px);"></div>
<div class="t" style="left:35.70px;top:444.90px;line-height:12px;font-size:8.27px;color:#1e1e1e;letter-spacing:-0.201px;">Presentation</div>
<svg class="a" style="left:20px;top:459px;" width="7" height="7" viewBox="0 0 7 7"><rect x="0.5" y="0.5" width="6" height="6" fill="#fff" stroke="#9a9a9a"/><path d="M2 3.5h3" stroke="#888"/><path d="M3.5 2v3" stroke="#888"/></svg>
<div class="a" style="left:27px;top:462px;width:7px;height:1px;background:repeating-linear-gradient(to right,#d0d0d0 0 2px,transparent 2px 3px);"></div>
<div class="t" style="left:35.70px;top:456.90px;line-height:12px;font-size:8.27px;color:#1e1e1e;letter-spacing:-0.288px;">Schematic Design</div>
<svg class="a" style="left:20px;top:471px;" width="7" height="7" viewBox="0 0 7 7"><rect x="0.5" y="0.5" width="6" height="6" fill="#fff" stroke="#9a9a9a"/><path d="M2 3.5h3" stroke="#888"/><path d="M3.5 2v3" stroke="#888"/></svg>
<div class="a" style="left:27px;top:474px;width:7px;height:1px;background:repeating-linear-gradient(to right,#d0d0d0 0 2px,transparent 2px 3px);"></div>
<div class="t" style="left:35.70px;top:468.90px;line-height:12px;font-size:8.27px;color:#1e1e1e;letter-spacing:-0.252px;">Slab Plans</div>
<svg class="a" style="left:20px;top:483px;" width="7" height="7" viewBox="0 0 7 7"><rect x="0.5" y="0.5" width="6" height="6" fill="#fff" stroke="#9a9a9a"/><path d="M2 3.5h3" stroke="#888"/><path d="M3.5 2v3" stroke="#888"/></svg>
<div class="a" style="left:27px;top:486px;width:7px;height:1px;background:repeating-linear-gradient(to right,#d0d0d0 0 2px,transparent 2px 3px);"></div>
<div class="t" style="left:35.70px;top:480.90px;line-height:12px;font-size:8.27px;color:#1e1e1e;letter-spacing:-0.182px;">Working Views</div>
<svg class="a" style="left:7px;top:495px;" width="7" height="7" viewBox="0 0 7 7"><rect x="0.5" y="0.5" width="6" height="6" fill="#fff" stroke="#9a9a9a"/><path d="M2 3.5h3" stroke="#888"/><path d="M3.5 2v3" stroke="#888"/></svg>
<svg class="a" style="left:18px;top:492px;" width="11" height="12" viewBox="0 0 11 12"><rect x="0.5" y="0.5" width="10" height="11" fill="#f2f2f2" stroke="#666"/><path d="M2.5 3h6M2.5 6h3M2.5 9h6" stroke="#777"/></svg>
<div class="t" style="left:33.00px;top:492.90px;line-height:12px;font-size:8.27px;color:#1e1e1e;letter-spacing:-0.388px;">Legends</div>
<svg class="a" style="left:7px;top:507px;" width="7" height="7" viewBox="0 0 7 7"><rect x="0.5" y="0.5" width="6" height="6" fill="#fff" stroke="#9a9a9a"/><path d="M2 3.5h3" stroke="#888"/><path d="M3.5 2v3" stroke="#888"/></svg>
<svg class="a" style="left:18px;top:505px;" width="11" height="10" viewBox="0 0 11 10"><rect x="0.5" y="0.5" width="10" height="9" fill="#fff" stroke="#555"/><path d="M0.5 3h10M0.5 5.5h10M0.5 8h10M3.5 0.5v9" stroke="#555"/></svg>
<div class="t" style="left:33.00px;top:504.90px;line-height:12px;font-size:8.27px;color:#1e1e1e;letter-spacing:-0.199px;">Schedules/Quantities (all)</div>
<svg class="a" style="left:7px;top:519px;" width="7" height="7" viewBox="0 0 7 7"><rect x="0.5" y="0.5" width="6" height="6" fill="#fff" stroke="#9a9a9a"/><path d="M2 3.5h3" stroke="#888"/><path d="M3.5 2v3" stroke="#888"/></svg>
<svg class="a" style="left:18px;top:516px;" width="11" height="12" viewBox="0 0 11 12"><rect x="0.5" y="0.5" width="10" height="11" fill="#f2f2f2" stroke="#666"/><path d="M2.5 3h6M2.5 6h3M2.5 9h6" stroke="#777"/></svg>
<div class="t" style="left:33.00px;top:516.90px;line-height:12px;font-size:8.27px;color:#1e1e1e;letter-spacing:-0.260px;">Sheets (BNIM Project Structure)</div>
<svg class="a" style="left:7px;top:531px;" width="7" height="7" viewBox="0 0 7 7"><rect x="0.5" y="0.5" width="6" height="6" fill="#fff" stroke="#9a9a9a"/><path d="M2 3.5h3" stroke="#888"/><path d="M3.5 2v3" stroke="#888"/></svg>
<svg class="a" style="left:18px;top:528px;" width="11" height="12" viewBox="0 0 11 12"><rect x="0.5" y="0.5" width="10" height="11" fill="#f2f2f2" stroke="#666"/><path d="M2.5 3h6M2.5 6h3M2.5 9h6" stroke="#777"/></svg>
<div class="t" style="left:33.00px;top:528.90px;line-height:12px;font-size:8.27px;color:#1e1e1e;letter-spacing:-0.221px;">Families</div>
<svg class="a" style="left:7px;top:543px;" width="7" height="7" viewBox="0 0 7 7"><rect x="0.5" y="0.5" width="6" height="6" fill="#fff" stroke="#9a9a9a"/><path d="M2 3.5h3" stroke="#888"/><path d="M3.5 2v3" stroke="#888"/></svg>
<svg class="a" style="left:18px;top:540px;" width="11" height="12" viewBox="0 0 11 12"><rect x="0.5" y="0.5" width="10" height="11" fill="#f2f2f2" stroke="#666"/><path d="M2.5 3h6M2.5 6h3M2.5 9h6" stroke="#777"/></svg>
<div class="t" style="left:33.00px;top:540.90px;line-height:12px;font-size:8.27px;color:#1e1e1e;letter-spacing:-0.351px;">Groups</div>
<svg class="a" style="left:7px;top:555px;" width="7" height="7" viewBox="0 0 7 7"><rect x="0.5" y="0.5" width="6" height="6" fill="#fff" stroke="#9a9a9a"/><path d="M2 3.5h3" stroke="#888"/></svg>
<svg class="a" style="left:18px;top:554px;" width="12" height="8" viewBox="0 0 12 8"><ellipse cx="4" cy="4" rx="3.5" ry="2.5" fill="none" stroke="#d9a520" stroke-width="1.6"/><ellipse cx="8" cy="4" rx="3.5" ry="2.5" fill="none" stroke="#d9a520" stroke-width="1.6"/></svg>
<div class="t" style="left:33.00px;top:552.90px;line-height:12px;font-size:8.27px;color:#1e1e1e;letter-spacing:-0.311px;">Revit Links</div>
<div class="a" style="left:25px;top:570px;width:7px;height:1px;background:repeating-linear-gradient(to right,#d0d0d0 0 2px,transparent 2px 3px);"></div>
<svg class="a" style="left:32px;top:565px;" width="9" height="10" viewBox="0 0 9 10"><path d="M3 0h3v5h3l-4.5 5L0 5h3z" fill="#2e78d2"/></svg>
<div class="t" style="left:46.00px;top:564.90px;line-height:12px;font-size:8.27px;color:#1e1e1e;letter-spacing:-0.277px;">PacificCenter_AY_Furniture.rvt</div>
<div class="a" style="left:25px;top:582px;width:7px;height:1px;background:repeating-linear-gradient(to right,#d0d0d0 0 2px,transparent 2px 3px);"></div>
<svg class="a" style="left:32px;top:577px;" width="9" height="10" viewBox="0 0 9 10"><path d="M3 0h3v5h3l-4.5 5L0 5h3z" fill="#2e78d2"/></svg>
<div class="t" style="left:46.00px;top:576.90px;line-height:12px;font-size:8.27px;color:#1e1e1e;letter-spacing:-0.371px;">PacificCenter_AY_Sun Shade.rvt</div>
<div class="a" style="left:25px;top:594px;width:7px;height:1px;background:repeating-linear-gradient(to right,#d0d0d0 0 2px,transparent 2px 3px);"></div>
<svg class="a" style="left:32px;top:589px;" width="9" height="10" viewBox="0 0 9 10"><path d="M3 0h3v5h3l-4.5 5L0 5h3z" fill="#2e78d2"/></svg>
<div class="t" style="left:46.00px;top:588.90px;line-height:12px;font-size:8.27px;color:#1e1e1e;letter-spacing:-0.269px;">PacificCenter_Context.rvt</div>
<div class="a" style="left:25px;top:606px;width:7px;height:1px;background:repeating-linear-gradient(to right,#d0d0d0 0 2px,transparent 2px 3px);"></div>
<svg class="a" style="left:32px;top:601px;" width="9" height="10" viewBox="0 0 9 10"><path d="M3 0h3v5h3l-4.5 5L0 5h3z" fill="#2e78d2"/></svg>
<div class="t" style="left:46.00px;top:600.90px;line-height:12px;font-size:8.27px;color:#1e1e1e;letter-spacing:-0.129px;">Pump-House.ifc</div>
<div class="a" style="left:174px;top:118px;width:861px;height:14px;background:#ececec;"></div>
<div class="a" style="left:174px;top:118px;width:86px;height:14px;background:#d3d3d3;"></div>
<svg class="a" style="left:264px;top:119px;" width="10" height="6" viewBox="0 0 10 6"><path d="M1 6a4 4 0 0 1 8 0" fill="none" stroke="#444"/></svg>
<svg class="a" style="left:177px;top:120px;" width="10" height="10" viewBox="0 0 10 10"><rect x="0.5" y="2.5" width="8" height="7" fill="none" stroke="#aaa"/><rect x="3.5" y="0.5" width="5" height="4" fill="#e0e0e0" stroke="#aaa"/></svg>
<div class="t" style="left:193.00px;top:120.40px;line-height:12px;font-size:8.48px;color:#a8a8a8;letter-spacing:-0.187px;">Level 1</div>
<div class="a" style="left:174px;top:132px;width:848px;height:570px;background:#ffffff;"></div>
<div class="a" style="left:176px;top:133px;width:44px;height:15px;background:#8e8e8e;"></div>
<div class="a" style="left:181px;top:133px;width:3px;height:15px;background:#2a2a2a;"></div>
<div class="a" style="left:186px;top:133px;width:1px;height:15px;background:#f0f0f0;"></div>
<div class="a" style="left:176px;top:147px;width:44px;height:2px;background:#3a3a3a;"></div>
<div class="a" style="left:176px;top:149px;width:44px;height:106px;background:#5f5f5f;"></div>
<div class="a" style="left:190px;top:149px;width:1px;height:106px;background:#444;"></div>
<div class="a" style="left:191px;top:218px;width:29px;height:1px;background:#3c3c3c;"></div>
<div class="a" style="left:176px;top:255px;width:44px;height:29px;background:#9b9b9b;"></div>
<div class="a" style="left:176px;top:284px;width:44px;height:5px;background:#1e1e1e;"></div>
<div class="a" style="left:1022px;top:132px;width:9px;height:570px;background:#f4f4f4;"></div>
<svg class="a" style="left:1023px;top:136px;" width="7" height="5" viewBox="0 0 7 5"><path d="M0.5 4.5l3-3 3 3" fill="none" stroke="#333"/></svg>
<div class="a" style="left:1023px;top:403px;width:7px;height:13px;background:#d0d0d0;"></div>
<div class="a" style="left:1031px;top:118px;width:4px;height:584px;background:#e8e8e8;"></div>
<svg class="a" style="left:1024px;top:122px;" width="8" height="7" viewBox="0 0 8 7"><path d="M0 0h7M0 2h7M0 4h7l-3.5 3z" fill="#444" stroke="#444" stroke-width="0.8"/></svg>
<svg class="a" style="left:945px;top:170px;" width="65" height="70" viewBox="0 0 65 70"><circle cx="32" cy="35" r="24" fill="none" stroke="#f2f2f2" stroke-width="7"/><circle cx="32" cy="35" r="27.5" fill="none" stroke="#d4d4d4" stroke-width="0.7"/><circle cx="32" cy="35" r="20.5" fill="none" stroke="#dcdcdc" stroke-width="0.7"/></svg>
<div class="a" style="left:971px;top:170px;width:8px;height:46px;background:#f2f2f2;border:1px solid #d8d8d8;"></div>
<svg class="a" style="left:995px;top:200px;" width="9" height="10" viewBox="0 0 9 10"><rect x="0.5" y="0.5" width="8" height="9" fill="#f4f4f4" stroke="#bbb"/><path d="M2 3h5M2 5h5M2 7h5" stroke="#bbb"/></svg>
<div class="a" style="left:999px;top:248px;width:24px;height:78px;background:#ffffff;border:1px solid #c4c4c4;border-radius:3px;"></div>
<svg class="a" style="left:1003px;top:251px;" width="17" height="72" viewBox="0 0 17 72"><circle cx="14" cy="3" r="2" fill="none" stroke="#999"/><circle cx="14" cy="69" r="2" fill="none" stroke="#999"/><circle cx="8.5" cy="18" r="6.5" fill="#f2f2f2" stroke="#888"/><circle cx="8.5" cy="18" r="3.5" fill="#fff" stroke="#888"/><path d="M7 29l1.5 1.5L10 29" fill="none" stroke="#999"/><path d="M2 33h14" stroke="#ccc"/><rect x="4" y="40" width="7" height="6" fill="#8fc48f"/><circle cx="11" cy="47" r="2.2" fill="none" stroke="#777"/><path d="M12.5 48.5l2 2" stroke="#777"/><path d="M7 57l1.5 1.5L10 57" fill="none" stroke="#999"/></svg>
<svg class="a" style="left:760px;top:600px;" width="262" height="102" viewBox="0 0 262 102"><path d="M211 22L262 55V102H60L25 55z" fill="#a9a9a9"/><path d="M25 55L62 84" stroke="#111" stroke-width="5"/><path d="M211 22L262 55" stroke="#222" stroke-width="4"/><path d="M30 55H262" stroke="#444" stroke-width="1"/></svg>
<div class="a" style="left:174px;top:686px;width:400px;height:16px;background:#f0f0f0;"></div>
<div class="a" style="left:174px;top:686px;width:400px;height:1px;background:#c8c8c8;"></div>
<div class="t" style="left:182.00px;top:689.40px;line-height:11px;font-size:7.95px;color:#222;letter-spacing:-0.178px;">1/8&quot; = 1&#x27;-0&quot;</div>
<svg class="a" style="left:230px;top:688px;" width="330" height="12" viewBox="0 0 330 12"><rect x="2" y="2" width="8" height="8" fill="#6a8ac0"/><rect x="20" y="2" width="8" height="8" fill="#c05050"/><rect x="40" y="2" width="8" height="8" fill="#6a8ac0"/><rect x="58" y="2" width="8" height="8" fill="#6a8ac0"/><path d="M80 10l5-8 5 8z" fill="#888"/><circle cx="104" cy="6" r="4" fill="#999"/><rect x="120" y="2" width="10" height="8" fill="#888"/><path d="M145 6h20" stroke="#888"/></svg>
<div class="a" style="left:574px;top:690px;width:448px;height:12px;background:#f2f2f2;"></div>
<svg class="a" style="left:1014px;top:691px;" width="6" height="9" viewBox="0 0 6 9"><path d="M1 1l4 3.5L1 8" fill="none" stroke="#333"/></svg>
<div class="a" style="left:219px;top:123px;width:752px;height:533px;background:#f0f0f0;border:1px solid #7a7a7a;box-shadow:0 0 6px rgba(0,0,0,0.25);"></div>
<div class="a" style="left:220px;top:124px;width:750px;height:21px;background:#ffffff;"></div>
<div class="t" style="left:225.00px;top:128.40px;line-height:12px;font-size:8.48px;color:#222;letter-spacing:-0.488px;">Material Browser - CUSTOM_Wall_EBD</div>
<div class="t" style="left:922.64px;top:127.40px;line-height:13px;font-size:9.01px;color:#333;">?</div>
<svg class="a" style="left:951px;top:128px;" width="9" height="9" viewBox="0 0 9 9"><path d="M0.5 0.5l8 8M8.5 0.5l-8 8" stroke="#222" stroke-width="1.1"/></svg>
<div class="a" style="left:225px;top:149px;width:304px;height:22px;background:#cfcfcf;"></div>
<div class="a" style="left:229px;top:152px;width:297px;height:16px;background:#f4f7fa;border:1px solid #8fb6dc;"></div>
<div class="a" style="left:232px;top:155px;width:1px;height:10px;background:#222;"></div>
<svg class="a" style="left:513px;top:155px;" width="11" height="11" viewBox="0 0 11 11"><circle cx="4.2" cy="4.2" r="3.2" fill="none" stroke="#333" stroke-width="1.2"/><path d="M6.6 6.6l3.4 3.4" stroke="#333" stroke-width="1.6"/></svg>
<div class="a" style="left:225px;top:171px;width:304px;height:17px;background:linear-gradient(#f6f6f6,#e2e2e2);border-bottom:1px solid #a0a0a0;"></div>
<div class="t" style="left:232.00px;top:174.40px;line-height:12px;font-size:8.48px;color:#333;letter-spacing:-0.236px;">Project Materials: All</div>
<svg class="a" style="left:310px;top:177px;" width="7" height="5" viewBox="0 0 7 5"><path d="M0 0h6l-3 4z" fill="#333"/></svg>
<svg class="a" style="left:316px;top:171px;" width="5" height="17" viewBox="0 0 5 17"><path d="M0.5 0.5l3.5 8-3.5 8" fill="none" stroke="#999"/></svg>
<svg class="a" style="left:491px;top:174px;" width="11" height="11" viewBox="0 0 11 11"><rect x="0.5" y="0.5" width="10" height="10" fill="#fff" stroke="#666"/><path d="M3.5 0.5v10M0.5 3h3" stroke="#666"/></svg>
<svg class="a" style="left:507px;top:174px;" width="15" height="11" viewBox="0 0 15 11"><path d="M1 1.5h2M1 5.5h2M1 9.5h2M5 1.5h6M5 5.5h6M5 9.5h6" stroke="#444" stroke-width="1.3"/><path d="M12 4.5h3l-1.5 2z" fill="#444"/></svg>
<div class="a" style="left:225px;top:189px;width:297px;height:423px;background:#ffffff;"></div>
<div class="a" style="left:253px;top:189px;width:1px;height:14px;background:#e6e6e6;"></div>
<div class="t" style="left:256.00px;top:190.90px;line-height:12px;font-size:8.48px;color:#333;letter-spacing:-0.398px;">Name</div>
<svg class="a" style="left:510px;top:194px;" width="7" height="4" viewBox="0 0 7 4"><path d="M0 3.5h6L3 0z" fill="#222"/></svg>
<div class="a" style="left:522px;top:189px;width:7px;height:423px;background:#dadada;"></div>
<svg class="a" style="left:522px;top:191px;" width="7" height="5" viewBox="0 0 7 5"><path d="M0.5 4l3-3 3 3z" fill="#bbb"/></svg>
<div class="a" style="left:522px;top:224px;width:7px;height:15px;background:#e8e8e8;border:1px solid #bdbdbd;"></div>
<div class="a" style="left:225px;top:203px;width:297px;height:27px;background:#e6e6e6;"></div>
<svg class="a" style="left:230px;top:206px;" width="21" height="21" viewBox="0 0 21 21"><rect width="21" height="21" fill="#4a4a4a"/><path d="M3 6L8 2H20V15L15 20H3z" fill="#2f2f2f"/><path d="M3 6L8 2H20L15 6z" fill="#fff" opacity="0.18"/><path d="M15 6L20 2V15L15 20z" fill="#000" opacity="0.2"/><path d="M0 14L7 21H0z" fill="#f0a81c"/><path d="M1.5 19.5h2" stroke="#fff" stroke-width="0.8"/></svg>
<div class="t" style="left:257.50px;top:212.38px;line-height:12px;font-size:8.27px;color:#1e1e1e;letter-spacing:-0.161px;">Concrete - Cast-in-Place Concrete</div>
<svg class="a" style="left:230px;top:233px;" width="21" height="21" viewBox="0 0 21 21"><rect width="21" height="21" fill="#474747"/><path d="M3 6L8 2H20V15L15 20H3z" fill="#2c2c2c"/><path d="M3 6L8 2H20L15 6z" fill="#fff" opacity="0.18"/><path d="M15 6L20 2V15L15 20z" fill="#000" opacity="0.2"/><path d="M0 14L7 21H0z" fill="#f0a81c"/><path d="M1.5 19.5h2" stroke="#fff" stroke-width="0.8"/></svg>
<div class="t" style="left:257.50px;top:239.73px;line-height:12px;font-size:8.27px;color:#1e1e1e;letter-spacing:-0.213px;">Concrete - Precast Concrete</div>
<div class="a" style="left:225px;top:258px;width:297px;height:27px;background:#e6e6e6;"></div>
<svg class="a" style="left:230px;top:261px;" width="21" height="21" viewBox="0 0 21 21"><rect width="21" height="21" fill="#9a9a9a"/><path d="M3 6L8 2H20V15L15 20H3z" fill="#858585"/><path d="M3 6L8 2H20L15 6z" fill="#fff" opacity="0.18"/><path d="M15 6L20 2V15L15 20z" fill="#000" opacity="0.2"/><path d="M0 14L7 21H0z" fill="#f0a81c"/><path d="M1.5 19.5h2" stroke="#fff" stroke-width="0.8"/></svg>
<div class="t" style="left:257.50px;top:267.07px;line-height:12px;font-size:8.27px;color:#1e1e1e;letter-spacing:-0.244px;">Concrete, Precast</div>
<svg class="a" style="left:230px;top:288px;" width="21" height="21" viewBox="0 0 21 21"><defs><radialGradient id="sg3" cx="0.35" cy="0.3" r="0.8"><stop offset="0" stop-color="#b0b0b0"/><stop offset="1" stop-color="#6e6e6e"/></radialGradient></defs><rect width="21" height="21" fill="#6e6e6e"/><circle cx="11" cy="11" r="10" fill="url(#sg3)"/><circle cx="13" cy="8" r="3.2" fill="#6e6e6e" opacity="0.9"/><path d="M0 14L7 21H0z" fill="#f0a81c"/><path d="M1.5 19.5h2" stroke="#fff" stroke-width="0.8"/></svg>
<div class="t" style="left:257.50px;top:294.43px;line-height:12px;font-size:8.27px;color:#1e1e1e;letter-spacing:-0.018px;">Copper</div>
<div class="a" style="left:225px;top:312px;width:297px;height:28px;background:#e6e6e6;"></div>
<svg class="a" style="left:230px;top:315px;" width="21" height="21" viewBox="0 0 21 21"><rect width="21" height="21" fill="#d2d2d2"/><path d="M3 6L8 2H20V15L15 20H3z" fill="#c2c2c2"/><path d="M3 6L8 2H20L15 6z" fill="#fff" opacity="0.18"/><path d="M15 6L20 2V15L15 20z" fill="#000" opacity="0.2"/><path d="M0 14L7 21H0z" fill="#f0a81c"/><path d="M1.5 19.5h2" stroke="#fff" stroke-width="0.8"/></svg>
<div class="t" style="left:257.50px;top:321.77px;line-height:12px;font-size:8.27px;color:#1e1e1e;letter-spacing:-0.184px;">Counter Top</div>
<div class="a" style="left:225px;top:340px;width:297px;height:27px;background:#bcd3ee;border:1px solid #7da2ce;"></div>
<svg class="a" style="left:230px;top:343px;" width="21" height="21" viewBox="0 0 21 21"><defs><radialGradient id="sg5" cx="0.35" cy="0.3" r="0.8"><stop offset="0" stop-color="#bcd0d2"/><stop offset="1" stop-color="#7d9a9d"/></radialGradient></defs><rect width="21" height="21" fill="#7d9a9d"/><circle cx="11" cy="11" r="10" fill="url(#sg5)"/><circle cx="13" cy="8" r="3.2" fill="#7d9a9d" opacity="0.9"/><path d="M0 14L7 21H0z" fill="#f0a81c"/><path d="M1.5 19.5h2" stroke="#fff" stroke-width="0.8"/></svg>
<div class="t" style="left:257.50px;top:349.12px;line-height:12px;font-size:8.27px;color:#1e1e1e;letter-spacing:-0.708px;">CUSTOM_Wall_EBD</div>
<div class="a" style="left:225px;top:367px;width:297px;height:27px;background:#e6e6e6;"></div>
<svg class="a" style="left:230px;top:370px;" width="21" height="21" viewBox="0 0 21 21"><rect width="21" height="21" fill="#dadada"/><path d="M3 6L8 2H20V15L15 20H3z" fill="#c8c8c8"/><path d="M3 6L8 2H20L15 6z" fill="#fff" opacity="0.18"/><path d="M15 6L20 2V15L15 20z" fill="#000" opacity="0.2"/><path d="M0 14L7 21H0z" fill="#f0a81c"/><path d="M1.5 19.5h2" stroke="#fff" stroke-width="0.8"/></svg>
<div class="t" style="left:257.50px;top:376.48px;line-height:12px;font-size:8.27px;color:#1e1e1e;letter-spacing:-0.016px;">Da-Mat</div>
<svg class="a" style="left:230px;top:397px;" width="21" height="21" viewBox="0 0 21 21"><defs><radialGradient id="sg7" cx="0.35" cy="0.3" r="0.8"><stop offset="0" stop-color="#3a3a3a"/><stop offset="1" stop-color="#151515"/></radialGradient></defs><rect width="21" height="21" fill="#151515"/><circle cx="11" cy="11" r="10" fill="url(#sg7)"/><circle cx="13" cy="8" r="3.2" fill="#151515" opacity="0.9"/><path d="M0 14L7 21H0z" fill="#f0a81c"/><path d="M1.5 19.5h2" stroke="#fff" stroke-width="0.8"/></svg>
<div class="t" style="left:257.50px;top:403.83px;line-height:12px;font-size:8.27px;color:#1e1e1e;letter-spacing:0.116px;">Default</div>
<div class="a" style="left:225px;top:422px;width:297px;height:27px;background:#e6e6e6;"></div>
<svg class="a" style="left:230px;top:425px;" width="21" height="21" viewBox="0 0 21 21"><rect width="21" height="21" fill="#9a9a9a"/><rect x="3" y="3" width="15" height="18" fill="#d2d2d2"/><rect x="12" y="3" width="6" height="18" fill="#000" opacity="0.12"/><ellipse cx="10.5" cy="3.5" rx="7.5" ry="2" fill="#e6e6e6"/><path d="M0 14L7 21H0z" fill="#f0a81c"/><path d="M1.5 19.5h2" stroke="#fff" stroke-width="0.8"/></svg>
<div class="t" style="left:257.50px;top:431.18px;line-height:12px;font-size:8.27px;color:#1e1e1e;letter-spacing:-0.120px;">Default 2</div>
<svg class="a" style="left:230px;top:452px;" width="21" height="21" viewBox="0 0 21 21"><defs><radialGradient id="sg9" cx="0.35" cy="0.3" r="0.8"><stop offset="0" stop-color="#a8a8a8"/><stop offset="1" stop-color="#5d5d5d"/></radialGradient></defs><rect width="21" height="21" fill="#5d5d5d"/><circle cx="11" cy="11" r="10" fill="url(#sg9)"/><circle cx="13" cy="8" r="3.2" fill="#5d5d5d" opacity="0.9"/><path d="M0 14L7 21H0z" fill="#f0a81c"/><path d="M1.5 19.5h2" stroke="#fff" stroke-width="0.8"/></svg>
<div class="t" style="left:257.50px;top:458.52px;line-height:12px;font-size:8.27px;color:#1e1e1e;letter-spacing:-0.024px;">Default Floor</div>
<div class="a" style="left:225px;top:476px;width:297px;height:28px;background:#e6e6e6;"></div>
<svg class="a" style="left:230px;top:479px;" width="21" height="21" viewBox="0 0 21 21"><defs><radialGradient id="sg10" cx="0.35" cy="0.3" r="0.8"><stop offset="0" stop-color="#a8a8a8"/><stop offset="1" stop-color="#5d5d5d"/></radialGradient></defs><rect width="21" height="21" fill="#5d5d5d"/><circle cx="11" cy="11" r="10" fill="url(#sg10)"/><circle cx="13" cy="8" r="3.2" fill="#5d5d5d" opacity="0.9"/><path d="M0 14L7 21H0z" fill="#f0a81c"/><path d="M1.5 19.5h2" stroke="#fff" stroke-width="0.8"/></svg>
<div class="t" style="left:257.50px;top:485.88px;line-height:12px;font-size:8.27px;color:#1e1e1e;letter-spacing:-0.293px;">Default Floor Area Face</div>
<svg class="a" style="left:230px;top:507px;" width="21" height="21" viewBox="0 0 21 21"><rect width="21" height="21" fill="#5e3f22"/><rect y="0" width="21" height="8" fill="#7a5634" opacity="0.5"/><path d="M0 14L7 21H0z" fill="#f0a81c"/><path d="M1.5 19.5h2" stroke="#fff" stroke-width="0.8"/></svg>
<div class="t" style="left:257.50px;top:513.22px;line-height:12px;font-size:8.27px;color:#1e1e1e;letter-spacing:0.025px;">Default Ground Plane</div>
<div class="a" style="left:225px;top:531px;width:297px;height:28px;background:#e6e6e6;"></div>
<svg class="a" style="left:230px;top:534px;" width="21" height="21" viewBox="0 0 21 21"><defs><radialGradient id="sg12" cx="0.35" cy="0.3" r="0.8"><stop offset="0" stop-color="#a8a8a8"/><stop offset="1" stop-color="#5d5d5d"/></radialGradient></defs><rect width="21" height="21" fill="#5d5d5d"/><circle cx="11" cy="11" r="10" fill="url(#sg12)"/><circle cx="13" cy="8" r="3.2" fill="#5d5d5d" opacity="0.9"/><path d="M0 14L7 21H0z" fill="#f0a81c"/><path d="M1.5 19.5h2" stroke="#fff" stroke-width="0.8"/></svg>
<div class="t" style="left:257.50px;top:540.57px;line-height:12px;font-size:8.27px;color:#1e1e1e;letter-spacing:0.355px;">Default Light Source</div>
<svg class="a" style="left:230px;top:562px;" width="21" height="21" viewBox="0 0 21 21"><defs><radialGradient id="sg13" cx="0.35" cy="0.3" r="0.8"><stop offset="0" stop-color="#8a8a8a"/><stop offset="1" stop-color="#3a3a3a"/></radialGradient></defs><rect width="21" height="21" fill="#3a3a3a"/><circle cx="11" cy="11" r="10" fill="url(#sg13)"/><circle cx="13" cy="8" r="3.2" fill="#3a3a3a" opacity="0.9"/><path d="M0 14L7 21H0z" fill="#f0a81c"/><path d="M1.5 19.5h2" stroke="#fff" stroke-width="0.8"/></svg>
<div class="t" style="left:257.50px;top:567.92px;line-height:12px;font-size:8.27px;color:#1e1e1e;letter-spacing:-0.269px;">Default Mass</div>
<div class="a" style="left:225px;top:586px;width:297px;height:26px;background:#e6e6e6;"></div>
<svg class="a" style="left:230px;top:589px;" width="21" height="21" viewBox="0 0 21 21"><rect width="21" height="21" fill="#666666"/><path d="M3 6L8 2H20V15L15 20H3z" fill="#444444"/><path d="M3 6L8 2H20L15 6z" fill="#fff" opacity="0.18"/><path d="M15 6L20 2V15L15 20z" fill="#000" opacity="0.2"/><path d="M0 14L7 21H0z" fill="#f0a81c"/><path d="M1.5 19.5h2" stroke="#fff" stroke-width="0.8"/></svg>
<div class="t" style="left:257.50px;top:595.27px;line-height:12px;font-size:8.27px;color:#1e1e1e;letter-spacing:-0.079px;">Default Roof</div>
<div class="a" style="left:225px;top:612px;width:304px;height:1px;background:#c8c8c8;"></div>
<svg class="a" style="left:229px;top:614px;" width="60" height="12" viewBox="0 0 60 12"><rect x="1" y="2" width="8" height="8" fill="#d99a2b"/><path d="M11 5h4l-2 2z" fill="#333"/><circle cx="25" cy="6" r="4.5" fill="#4a7bc0"/><path d="M33 5h4l-2 2z" fill="#333"/><rect x="42" y="1" width="10" height="9" fill="#fff" stroke="#5577aa"/><path d="M42 4h10M42 7h10" stroke="#5577aa"/></svg>
<div class="t" style="left:517.39px;top:611.40px;line-height:18px;font-size:13px;color:#555;">«</div>
<div class="a" style="left:529px;top:149px;width:1px;height:467px;background:#c8c8c8;"></div>
<div class="a" style="left:530px;top:149px;width:436px;height:467px;background:#e2e2e2;"></div>
<div class="a" style="left:530px;top:145px;width:436px;height:24px;background:linear-gradient(#f0f0f0,#e0e0e0);"></div>
<div class="a" style="left:533px;top:169px;width:431px;height:1px;background:#a8a8a8;"></div>
<div class="a" style="left:539px;top:153px;width:34px;height:16px;background:#dedede;border:1px solid #bdbdbd;border-bottom:none;border-radius:2px 2px 0 0;"></div>
<div class="a" style="left:574px;top:152px;width:37px;height:18px;background:#f3f3f3;border:1px solid #a8a8a8;border-bottom:none;border-radius:2px 2px 0 0;"></div>
<div class="a" style="left:612px;top:153px;width:48px;height:16px;background:#dedede;border:1px solid #bdbdbd;border-bottom:none;border-radius:2px 2px 0 0;"></div>
<div class="t" style="left:541.00px;top:156.40px;line-height:12px;font-size:8.48px;color:#333;letter-spacing:0.212px;">Identity</div>
<div class="t" style="left:577.00px;top:156.40px;line-height:12px;font-size:8.48px;color:#222;letter-spacing:-0.361px;">Graphics</div>
<div class="t" style="left:615.00px;top:156.40px;line-height:12px;font-size:8.48px;color:#222;letter-spacing:-0.367px;">Appearance</div>
<div class="a" style="left:662px;top:157px;width:11px;height:11px;background:#f6f6f6;border:1px solid #777;"></div>
<div class="t" style="left:664.87px;top:156.70px;line-height:13px;font-size:9.54px;color:#222;">+</div>
<svg class="a" style="left:538px;top:176px;" width="7" height="6" viewBox="0 0 7 6"><path d="M0 0h7L3.5 5.5z" fill="#222"/></svg>
<div class="t" style="left:546.00px;top:174.40px;line-height:12px;font-size:8.48px;color:#222;font-weight:bold;letter-spacing:-0.629px;">Shading</div>
<div class="a" style="left:629px;top:189px;width:8px;height:8px;background:#f2f2f2;border:1px solid #c4c4c4;"></div>
<div class="t" style="left:640.00px;top:187.90px;line-height:12px;font-size:8.48px;color:#333;letter-spacing:-0.486px;">Use Render Appearance</div>
<div class="t" style="left:605.00px;top:203.20px;line-height:12px;font-size:8.48px;color:#444;letter-spacing:-0.447px;">Color</div>
<div class="a" style="left:629px;top:202px;width:322px;height:12px;background:#5a8396;"></div>
<div class="t" style="left:631.00px;top:203.70px;line-height:11px;font-size:7.74px;color:#fff;letter-spacing:-0.396px;">RGB 90 131 150</div>
<div class="t" style="left:577.00px;top:217.90px;line-height:12px;font-size:8.48px;color:#444;letter-spacing:-0.455px;">Transparency</div>
<div class="a" style="left:629px;top:217px;width:214px;height:11px;background:#ffffff;border:1px solid #d8d8d8;"></div>
<div class="a" style="left:845px;top:217px;width:106px;height:11px;background:#f4f4f4;border:1px solid #d0d0d0;"></div>
<div class="t" style="left:848.00px;top:218.20px;line-height:11px;font-size:7.95px;color:#222;">0</div>
<div class="a" style="left:533px;top:232px;width:431px;height:1px;background:#d2d2d2;"></div>
<svg class="a" style="left:538px;top:238px;" width="7" height="6" viewBox="0 0 7 6"><path d="M0 0h7L3.5 5.5z" fill="#222"/></svg>
<div class="t" style="left:546.00px;top:236.20px;line-height:12px;font-size:8.48px;color:#222;font-weight:bold;letter-spacing:-0.307px;">Surface Pattern</div>
<div class="a" style="left:533px;top:249px;width:431px;height:1px;background:#d2d2d2;"></div>
<svg class="a" style="left:550px;top:254px;" width="7" height="6" viewBox="0 0 7 6"><path d="M0 0h7L3.5 5.5z" fill="#222"/></svg>
<div class="t" style="left:558.00px;top:251.90px;line-height:12px;font-size:8.48px;color:#222;font-weight:bold;letter-spacing:-0.551px;">Foreground</div>
<div class="t" style="left:598.00px;top:270.90px;line-height:12px;font-size:8.48px;color:#444;letter-spacing:-0.329px;">Pattern</div>
<div class="a" style="left:628px;top:264px;width:324px;height:24px;background:#ffffff;border:1px solid #d8d8d8;"></div>
<div class="t" style="left:630.00px;top:269.90px;line-height:14px;font-size:9.86px;color:#111;letter-spacing:-0.246px;">King Brick</div>
<svg class="a" style="left:790px;top:266px;" width="160" height="20" viewBox="0 0 160 20"><rect x="0.5" y="0.5" width="159" height="19" fill="#fff" stroke="#333"/><path d="M0 0.00H160M0 4.00H160M0 8.00H160M0 12.00H160M0 16.00H160M0 20.00H160M0.0 0.00V4.00M11.0 0.00V4.00M22.0 0.00V4.00M33.0 0.00V4.00M44.0 0.00V4.00M55.0 0.00V4.00M66.0 0.00V4.00M77.0 0.00V4.00M88.0 0.00V4.00M99.0 0.00V4.00M110.0 0.00V4.00M121.0 0.00V4.00M132.0 0.00V4.00M143.0 0.00V4.00M154.0 0.00V4.00M5.5 4.00V8.00M16.5 4.00V8.00M27.5 4.00V8.00M38.5 4.00V8.00M49.5 4.00V8.00M60.5 4.00V8.00M71.5 4.00V8.00M82.5 4.00V8.00M93.5 4.00V8.00M104.5 4.00V8.00M115.5 4.00V8.00M126.5 4.00V8.00M137.5 4.00V8.00M148.5 4.00V8.00M159.5 4.00V8.00M0.0 8.00V12.00M11.0 8.00V12.00M22.0 8.00V12.00M33.0 8.00V12.00M44.0 8.00V12.00M55.0 8.00V12.00M66.0 8.00V12.00M77.0 8.00V12.00M88.0 8.00V12.00M99.0 8.00V12.00M110.0 8.00V12.00M121.0 8.00V12.00M132.0 8.00V12.00M143.0 8.00V12.00M154.0 8.00V12.00M5.5 12.00V16.00M16.5 12.00V16.00M27.5 12.00V16.00M38.5 12.00V16.00M49.5 12.00V16.00M60.5 12.00V16.00M71.5 12.00V16.00M82.5 12.00V16.00M93.5 12.00V16.00M104.5 12.00V16.00M115.5 12.00V16.00M126.5 12.00V16.00M137.5 12.00V16.00M148.5 12.00V16.00M159.5 12.00V16.00M0.0 16.00V20.00M11.0 16.00V20.00M22.0 16.00V20.00M33.0 16.00V20.00M44.0 16.00V20.00M55.0 16.00V20.00M66.0 16.00V20.00M77.0 16.00V20.00M88.0 16.00V20.00M99.0 16.00V20.00M110.0 16.00V20.00M121.0 16.00V20.00M132.0 16.00V20.00M143.0 16.00V20.00M154.0 16.00V20.00" stroke="#444" stroke-width="0.6" fill="none"/></svg>
<div class="t" style="left:605.00px;top:290.90px;line-height:12px;font-size:8.48px;color:#444;letter-spacing:-0.447px;">Color</div>
<div class="a" style="left:629px;top:290px;width:322px;height:12px;background:#000000;"></div>
<div class="t" style="left:631.00px;top:291.70px;line-height:11px;font-size:7.74px;color:#fff;letter-spacing:-0.292px;">RGB 0 0 0</div>
<div class="t" style="left:586.00px;top:306.90px;line-height:12px;font-size:8.48px;color:#444;letter-spacing:-0.073px;">Alignment</div>
<div class="a" style="left:629px;top:305px;width:70px;height:14px;background:#f4f4f4;border:1px solid #adadad;"></div>
<div class="t" style="left:631.00px;top:306.90px;line-height:12px;font-size:8.27px;color:#222;letter-spacing:-0.352px;">Texture Alignment...</div>
<div class="a" style="left:533px;top:323px;width:431px;height:1px;background:#d2d2d2;"></div>
<svg class="a" style="left:550px;top:328px;" width="7" height="6" viewBox="0 0 7 6"><path d="M0 0h7L3.5 5.5z" fill="#222"/></svg>
<div class="t" style="left:558.00px;top:325.90px;line-height:12px;font-size:8.48px;color:#222;font-weight:bold;letter-spacing:-0.641px;">Background</div>
<div class="t" style="left:598.00px;top:344.90px;line-height:12px;font-size:8.48px;color:#444;letter-spacing:-0.329px;">Pattern</div>
<div class="a" style="left:628px;top:338px;width:324px;height:22px;background:#ffffff;border:1px solid #d8d8d8;"></div>
<div class="t" style="left:630.00px;top:342.90px;line-height:14px;font-size:9.86px;color:#111;letter-spacing:-0.210px;">&lt;Solid fill&gt;</div>
<div class="a" style="left:790px;top:340px;width:160px;height:18px;background:#5a8396;border:1px solid #3f5f6e;"></div>
<div class="t" style="left:605.00px;top:364.90px;line-height:12px;font-size:8.48px;color:#444;letter-spacing:-0.447px;">Color</div>
<div class="a" style="left:629px;top:364px;width:322px;height:11px;background:#5a8396;"></div>
<div class="t" style="left:631.00px;top:365.20px;line-height:11px;font-size:7.74px;color:#fff;letter-spacing:-0.396px;">RGB 90 131 150</div>
<div class="a" style="left:533px;top:380px;width:431px;height:1px;background:#d2d2d2;"></div>
<svg class="a" style="left:538px;top:385px;" width="7" height="6" viewBox="0 0 7 6"><path d="M0 0h7L3.5 5.5z" fill="#222"/></svg>
<div class="t" style="left:546.00px;top:382.90px;line-height:12px;font-size:8.48px;color:#222;font-weight:bold;letter-spacing:-0.331px;">Cut Pattern</div>
<div class="a" style="left:533px;top:396px;width:431px;height:1px;background:#d2d2d2;"></div>
<svg class="a" style="left:550px;top:401px;" width="7" height="6" viewBox="0 0 7 6"><path d="M0 0h7L3.5 5.5z" fill="#222"/></svg>
<div class="t" style="left:558.00px;top:398.90px;line-height:12px;font-size:8.48px;color:#222;font-weight:bold;letter-spacing:-0.551px;">Foreground</div>
<div class="t" style="left:598.00px;top:417.90px;line-height:12px;font-size:8.48px;color:#444;letter-spacing:-0.329px;">Pattern</div>
<div class="a" style="left:628px;top:411px;width:324px;height:24px;background:#ffffff;border:1px solid #d8d8d8;"></div>
<div class="t" style="left:630.00px;top:416.90px;line-height:14px;font-size:9.86px;color:#111;letter-spacing:-0.356px;">ARCHT01</div>
<svg class="a" style="left:790px;top:413px;" width="160" height="20" viewBox="0 0 160 20"><rect x="0.5" y="0.5" width="159" height="19" fill="#fff" stroke="#444"/><path d="M-20 0L0 20M0 0L-20 20M-10 0L10 20M10 0L-10 20M0 0L20 20M20 0L0 20M10 0L30 20M30 0L10 20M20 0L40 20M40 0L20 20M30 0L50 20M50 0L30 20M40 0L60 20M60 0L40 20M50 0L70 20M70 0L50 20M60 0L80 20M80 0L60 20M70 0L90 20M90 0L70 20M80 0L100 20M100 0L80 20M90 0L110 20M110 0L90 20M100 0L120 20M120 0L100 20M110 0L130 20M130 0L110 20M120 0L140 20M140 0L120 20M130 0L150 20M150 0L130 20M140 0L160 20M160 0L140 20M150 0L170 20M170 0L150 20M160 0L180 20M180 0L160 20M170 0L190 20M190 0L170 20" stroke="#444" stroke-width="0.7" fill="none"/></svg>
<div class="t" style="left:605.00px;top:437.90px;line-height:12px;font-size:8.48px;color:#444;letter-spacing:-0.447px;">Color</div>
<div class="a" style="left:629px;top:438px;width:322px;height:11px;background:#000000;"></div>
<div class="t" style="left:631.00px;top:439.20px;line-height:11px;font-size:7.74px;color:#fff;letter-spacing:-0.292px;">RGB 0 0 0</div>
<div class="a" style="left:533px;top:452px;width:431px;height:1px;background:#d2d2d2;"></div>
<svg class="a" style="left:550px;top:457px;" width="7" height="6" viewBox="0 0 7 6"><path d="M0 0h7L3.5 5.5z" fill="#222"/></svg>
<div class="t" style="left:558.00px;top:454.90px;line-height:12px;font-size:8.48px;color:#222;font-weight:bold;letter-spacing:-0.641px;">Background</div>
<div class="t" style="left:598.00px;top:473.90px;line-height:12px;font-size:8.48px;color:#444;letter-spacing:-0.329px;">Pattern</div>
<div class="a" style="left:628px;top:467px;width:324px;height:23px;background:#ffffff;border:1px solid #d8d8d8;"></div>
<div class="t" style="left:630.00px;top:472.40px;line-height:14px;font-size:9.86px;color:#111;letter-spacing:-0.210px;">&lt;Solid fill&gt;</div>
<div class="a" style="left:790px;top:469px;width:160px;height:19px;background:#5a8396;border:1px solid #3f5f6e;"></div>
<div class="t" style="left:605.00px;top:493.90px;line-height:12px;font-size:8.48px;color:#444;letter-spacing:-0.447px;">Color</div>
<div class="a" style="left:629px;top:494px;width:322px;height:11px;background:#5a8396;"></div>
<div class="t" style="left:631.00px;top:495.20px;line-height:11px;font-size:7.74px;color:#fff;letter-spacing:-0.396px;">RGB 90 131 150</div>
<div class="a" style="left:965px;top:145px;width:5px;height:471px;background:#ececec;"></div>
<div class="a" style="left:842px;top:633px;width:39px;height:14px;background:#e8eef6;border:1px solid #3c7fb1;"></div>
<div class="t" style="left:855.72px;top:634.90px;line-height:12px;font-size:8.48px;color:#222;letter-spacing:-0.339px;">OK</div>
<div class="a" style="left:885px;top:633px;width:40px;height:14px;background:#eaeaea;border:1px solid #adadad;"></div>
<div class="t" style="left:892.55px;top:634.90px;line-height:12px;font-size:8.48px;color:#222;letter-spacing:-0.243px;">Cancel</div>
<div class="a" style="left:1035px;top:118px;width:245px;height:584px;background:#f0f0f0;"></div>
<div class="a" style="left:1035px;top:118px;width:1px;height:584px;background:#d0d0d0;"></div>
<div class="t" style="left:1040.00px;top:120.90px;line-height:12px;font-size:8.48px;color:#444;letter-spacing:-0.360px;">Properties</div>
<div class="a" style="left:1036px;top:133px;width:244px;height:1px;background:#dadada;"></div>
<div class="a" style="left:1040px;top:134px;width:44px;height:44px;background:#f2f2f2;border:1px solid #d6d6d6;"></div>
<svg class="a" style="left:1050px;top:144px;" width="24" height="24" viewBox="0 0 24 24"><path d="M13 10L19 7V16L13 20z" fill="#e4e4e4" stroke="#333" stroke-width="1" stroke-linejoin="round"/><path d="M3 11L8 4L13 10V20L3 17z" fill="#fff" stroke="#333" stroke-width="1" stroke-linejoin="round"/><path d="M8 4L14 1L20 7L13 10z" fill="#c8c8c8" stroke="#333" stroke-width="1" stroke-linejoin="round"/><path d="M6 13.5L9 14.5V19L6 18z" fill="#222"/></svg>
<div class="t" style="left:1087.00px;top:145.90px;line-height:12px;font-size:8.48px;color:#333;letter-spacing:-0.340px;">3D View</div>
<div class="t" style="left:1087.00px;top:157.40px;line-height:12px;font-size:8.48px;color:#333;letter-spacing:-0.559px;">3D View EBD</div>
<svg class="a" style="left:1275px;top:154px;" width="6" height="4" viewBox="0 0 6 4"><path d="M0 0h5l-2.5 3z" fill="#333"/></svg>
<div class="a" style="left:1038px;top:181px;width:190px;height:15px;background:#e4e4e4;border:1px solid #cfcfcf;"></div>
<div class="t" style="left:1041.00px;top:183.40px;line-height:12px;font-size:8.48px;color:#222;letter-spacing:-0.580px;">3D View: EBD_Color</div>
<svg class="a" style="left:1218px;top:186px;" width="8" height="5" viewBox="0 0 8 5"><path d="M0.5 0.5l3.5 3.5 3.5-3.5" fill="none" stroke="#444"/></svg>
<svg class="a" style="left:1231px;top:182px;" width="12" height="12" viewBox="0 0 12 12"><rect x="0.5" y="0.5" width="5" height="5" fill="#fff" stroke="#555"/><rect x="6.5" y="0.5" width="5" height="5" fill="#fff" stroke="#555"/><rect x="0.5" y="6.5" width="5" height="5" fill="#fff" stroke="#555"/><rect x="6.5" y="6.5" width="5" height="5" fill="#fff" stroke="#555"/></svg>
<div class="t" style="left:1245.00px;top:182.40px;line-height:12px;font-size:8.48px;color:#222;letter-spacing:-0.367px;">Edit Type</div>
<div class="a" style="left:1038px;top:197px;width:232px;height:487px;background:#ffffff;"></div>
<div class="a" style="left:1038px;top:197px;width:232px;height:12px;background:#dcdcdc;"></div>
<div class="t" style="left:1040.00px;top:197.30px;line-height:12px;font-size:8.48px;color:#222;letter-spacing:-0.234px;">Graphics</div>
<svg class="a" style="left:1261px;top:200px;" width="7" height="7" viewBox="0 0 7 7"><path d="M0.8 3.5L3 1.3 5.2 3.5M0.8 6L3 3.8 5.2 6" fill="none" stroke="#222" stroke-width="0.9"/></svg>
<div class="a" style="left:1038px;top:220px;width:232px;height:1px;background:repeating-linear-gradient(to right,#b0b0b0 0 2px,transparent 2px 3px);"></div>
<div class="a" style="left:1150px;top:209px;width:1px;height:12px;background:repeating-linear-gradient(to bottom,#b0b0b0 0 2px,transparent 2px 3px);"></div>
<div class="a" style="left:1262px;top:209px;width:1px;height:12px;background:repeating-linear-gradient(to bottom,#b0b0b0 0 2px,transparent 2px 3px);"></div>
<div class="a" style="left:1270px;top:209px;width:1px;height:12px;background:repeating-linear-gradient(to bottom,#b0b0b0 0 2px,transparent 2px 3px);"></div>
<div class="t" style="left:1043.00px;top:209.30px;line-height:12px;font-size:8.27px;color:#222;letter-spacing:-0.231px;">View Scale</div>
<div class="a" style="left:1150px;top:209px;width:112px;height:12px;background:#fff;border:1px solid #333;"></div>
<div class="t" style="left:1153.00px;top:209.30px;line-height:12px;font-size:8.27px;color:#222;letter-spacing:-0.190px;">1/8&quot; = 1&#x27;-0&quot;</div>
<div class="a" style="left:1038px;top:232px;width:232px;height:1px;background:repeating-linear-gradient(to right,#b0b0b0 0 2px,transparent 2px 3px);"></div>
<div class="a" style="left:1150px;top:221px;width:1px;height:12px;background:repeating-linear-gradient(to bottom,#b0b0b0 0 2px,transparent 2px 3px);"></div>
<div class="a" style="left:1262px;top:221px;width:1px;height:12px;background:repeating-linear-gradient(to bottom,#b0b0b0 0 2px,transparent 2px 3px);"></div>
<div class="a" style="left:1270px;top:221px;width:1px;height:12px;background:repeating-linear-gradient(to bottom,#b0b0b0 0 2px,transparent 2px 3px);"></div>
<div class="t" style="left:1043.00px;top:221.30px;line-height:12px;font-size:8.27px;color:#909090;letter-spacing:-0.199px;">Scale Value    1:</div>
<div class="t" style="left:1152.00px;top:221.30px;line-height:12px;font-size:8.27px;color:#909090;letter-spacing:-0.261px;">96</div>
<div class="a" style="left:1038px;top:244px;width:232px;height:1px;background:repeating-linear-gradient(to right,#b0b0b0 0 2px,transparent 2px 3px);"></div>
<div class="a" style="left:1150px;top:233px;width:1px;height:12px;background:repeating-linear-gradient(to bottom,#b0b0b0 0 2px,transparent 2px 3px);"></div>
<div class="a" style="left:1262px;top:233px;width:1px;height:12px;background:repeating-linear-gradient(to bottom,#b0b0b0 0 2px,transparent 2px 3px);"></div>
<div class="a" style="left:1270px;top:233px;width:1px;height:12px;background:repeating-linear-gradient(to bottom,#b0b0b0 0 2px,transparent 2px 3px);"></div>
<div class="t" style="left:1043.00px;top:233.30px;line-height:12px;font-size:8.27px;color:#222;letter-spacing:-0.204px;">Detail Level</div>
<div class="t" style="left:1152.00px;top:233.30px;line-height:12px;font-size:8.27px;color:#222;letter-spacing:-0.278px;">Medium</div>
<div class="a" style="left:1038px;top:256px;width:232px;height:1px;background:repeating-linear-gradient(to right,#b0b0b0 0 2px,transparent 2px 3px);"></div>
<div class="a" style="left:1150px;top:245px;width:1px;height:12px;background:repeating-linear-gradient(to bottom,#b0b0b0 0 2px,transparent 2px 3px);"></div>
<div class="a" style="left:1262px;top:245px;width:1px;height:12px;background:repeating-linear-gradient(to bottom,#b0b0b0 0 2px,transparent 2px 3px);"></div>
<div class="a" style="left:1270px;top:245px;width:1px;height:12px;background:repeating-linear-gradient(to bottom,#b0b0b0 0 2px,transparent 2px 3px);"></div>
<div class="t" style="left:1043.00px;top:245.30px;line-height:12px;font-size:8.27px;color:#222;letter-spacing:-0.182px;">Parts Visibility</div>
<div class="t" style="left:1152.00px;top:245.30px;line-height:12px;font-size:8.27px;color:#222;letter-spacing:-0.224px;">Show Original</div>
<div class="a" style="left:1038px;top:268px;width:232px;height:1px;background:repeating-linear-gradient(to right,#b0b0b0 0 2px,transparent 2px 3px);"></div>
<div class="a" style="left:1150px;top:257px;width:1px;height:12px;background:repeating-linear-gradient(to bottom,#b0b0b0 0 2px,transparent 2px 3px);"></div>
<div class="a" style="left:1262px;top:257px;width:1px;height:12px;background:repeating-linear-gradient(to bottom,#b0b0b0 0 2px,transparent 2px 3px);"></div>
<div class="a" style="left:1270px;top:257px;width:1px;height:12px;background:repeating-linear-gradient(to bottom,#b0b0b0 0 2px,transparent 2px 3px);"></div>
<div class="t" style="left:1043.00px;top:257.30px;line-height:12px;font-size:8.27px;color:#222;letter-spacing:-0.202px;">Visibility/Graphics Overrides</div>
<div class="a" style="left:1151px;top:258px;width:111px;height:10px;background:#e1e1e1;border:1px solid #b8b8b8;"></div>
<div class="t" style="left:1196.53px;top:257.30px;line-height:12px;font-size:8.27px;color:#222;letter-spacing:-0.171px;">Edit...</div>
<div class="a" style="left:1038px;top:280px;width:232px;height:1px;background:repeating-linear-gradient(to right,#b0b0b0 0 2px,transparent 2px 3px);"></div>
<div class="a" style="left:1150px;top:269px;width:1px;height:12px;background:repeating-linear-gradient(to bottom,#b0b0b0 0 2px,transparent 2px 3px);"></div>
<div class="a" style="left:1262px;top:269px;width:1px;height:12px;background:repeating-linear-gradient(to bottom,#b0b0b0 0 2px,transparent 2px 3px);"></div>
<div class="a" style="left:1270px;top:269px;width:1px;height:12px;background:repeating-linear-gradient(to bottom,#b0b0b0 0 2px,transparent 2px 3px);"></div>
<div class="t" style="left:1043.00px;top:269.30px;line-height:12px;font-size:8.27px;color:#222;letter-spacing:-0.220px;">Graphic Display Options</div>
<div class="a" style="left:1151px;top:270px;width:111px;height:10px;background:#e1e1e1;border:1px solid #b8b8b8;"></div>
<div class="t" style="left:1196.53px;top:269.30px;line-height:12px;font-size:8.27px;color:#222;letter-spacing:-0.171px;">Edit...</div>
<div class="a" style="left:1038px;top:292px;width:232px;height:1px;background:repeating-linear-gradient(to right,#b0b0b0 0 2px,transparent 2px 3px);"></div>
<div class="a" style="left:1150px;top:281px;width:1px;height:12px;background:repeating-linear-gradient(to bottom,#b0b0b0 0 2px,transparent 2px 3px);"></div>
<div class="a" style="left:1262px;top:281px;width:1px;height:12px;background:repeating-linear-gradient(to bottom,#b0b0b0 0 2px,transparent 2px 3px);"></div>
<div class="a" style="left:1270px;top:281px;width:1px;height:12px;background:repeating-linear-gradient(to bottom,#b0b0b0 0 2px,transparent 2px 3px);"></div>
<div class="t" style="left:1043.00px;top:281.30px;line-height:12px;font-size:8.27px;color:#222;letter-spacing:-0.201px;">Discipline</div>
<div class="t" style="left:1152.00px;top:281.30px;line-height:12px;font-size:8.27px;color:#222;letter-spacing:-0.222px;">Coordination</div>
<div class="a" style="left:1038px;top:304px;width:232px;height:1px;background:repeating-linear-gradient(to right,#b0b0b0 0 2px,transparent 2px 3px);"></div>
<div class="a" style="left:1150px;top:293px;width:1px;height:12px;background:repeating-linear-gradient(to bottom,#b0b0b0 0 2px,transparent 2px 3px);"></div>
<div class="a" style="left:1262px;top:293px;width:1px;height:12px;background:repeating-linear-gradient(to bottom,#b0b0b0 0 2px,transparent 2px 3px);"></div>
<div class="a" style="left:1270px;top:293px;width:1px;height:12px;background:repeating-linear-gradient(to bottom,#b0b0b0 0 2px,transparent 2px 3px);"></div>
<div class="t" style="left:1043.00px;top:293.30px;line-height:12px;font-size:8.27px;color:#222;letter-spacing:-0.238px;">Show Hidden Lines</div>
<div class="t" style="left:1152.00px;top:293.30px;line-height:12px;font-size:8.27px;color:#222;letter-spacing:-0.206px;">By Discipline</div>
<div class="a" style="left:1038px;top:316px;width:232px;height:1px;background:repeating-linear-gradient(to right,#b0b0b0 0 2px,transparent 2px 3px);"></div>
<div class="a" style="left:1150px;top:305px;width:1px;height:12px;background:repeating-linear-gradient(to bottom,#b0b0b0 0 2px,transparent 2px 3px);"></div>
<div class="a" style="left:1262px;top:305px;width:1px;height:12px;background:repeating-linear-gradient(to bottom,#b0b0b0 0 2px,transparent 2px 3px);"></div>
<div class="a" style="left:1270px;top:305px;width:1px;height:12px;background:repeating-linear-gradient(to bottom,#b0b0b0 0 2px,transparent 2px 3px);"></div>
<div class="t" style="left:1043.00px;top:305.30px;line-height:12px;font-size:8.27px;color:#222;letter-spacing:-0.207px;">Default Analysis Display Style</div>
<div class="t" style="left:1152.00px;top:305.30px;line-height:12px;font-size:8.27px;color:#222;letter-spacing:-0.280px;">None</div>
<div class="a" style="left:1038px;top:328px;width:232px;height:1px;background:repeating-linear-gradient(to right,#b0b0b0 0 2px,transparent 2px 3px);"></div>
<div class="a" style="left:1150px;top:317px;width:1px;height:12px;background:repeating-linear-gradient(to bottom,#b0b0b0 0 2px,transparent 2px 3px);"></div>
<div class="a" style="left:1262px;top:317px;width:1px;height:12px;background:repeating-linear-gradient(to bottom,#b0b0b0 0 2px,transparent 2px 3px);"></div>
<div class="a" style="left:1270px;top:317px;width:1px;height:12px;background:repeating-linear-gradient(to bottom,#b0b0b0 0 2px,transparent 2px 3px);"></div>
<div class="t" style="left:1043.00px;top:317.30px;line-height:12px;font-size:8.27px;color:#222;letter-spacing:-0.200px;">Visible In Option</div>
<div class="t" style="left:1152.00px;top:317.30px;line-height:12px;font-size:8.27px;color:#222;letter-spacing:-0.156px;">all</div>
<div class="a" style="left:1038px;top:340px;width:232px;height:1px;background:repeating-linear-gradient(to right,#b0b0b0 0 2px,transparent 2px 3px);"></div>
<div class="a" style="left:1150px;top:329px;width:1px;height:12px;background:repeating-linear-gradient(to bottom,#b0b0b0 0 2px,transparent 2px 3px);"></div>
<div class="a" style="left:1262px;top:329px;width:1px;height:12px;background:repeating-linear-gradient(to bottom,#b0b0b0 0 2px,transparent 2px 3px);"></div>
<div class="a" style="left:1270px;top:329px;width:1px;height:12px;background:repeating-linear-gradient(to bottom,#b0b0b0 0 2px,transparent 2px 3px);"></div>
<div class="t" style="left:1043.00px;top:329.30px;line-height:12px;font-size:8.27px;color:#222;letter-spacing:-0.241px;">Sun Path</div>
<div class="a" style="left:1152px;top:331px;width:9px;height:9px;background:#fff;border:1px solid #8a8a8a;"></div>
<div class="a" style="left:1038px;top:341px;width:232px;height:12px;background:#dcdcdc;"></div>
<div class="t" style="left:1040.00px;top:341.30px;line-height:12px;font-size:8.48px;color:#222;letter-spacing:-0.215px;">Text</div>
<svg class="a" style="left:1261px;top:344px;" width="7" height="7" viewBox="0 0 7 7"><path d="M0.8 3.5L3 1.3 5.2 3.5M0.8 6L3 3.8 5.2 6" fill="none" stroke="#222" stroke-width="0.9"/></svg>
<div class="a" style="left:1038px;top:364px;width:232px;height:1px;background:repeating-linear-gradient(to right,#b0b0b0 0 2px,transparent 2px 3px);"></div>
<div class="a" style="left:1150px;top:353px;width:1px;height:12px;background:repeating-linear-gradient(to bottom,#b0b0b0 0 2px,transparent 2px 3px);"></div>
<div class="a" style="left:1262px;top:353px;width:1px;height:12px;background:repeating-linear-gradient(to bottom,#b0b0b0 0 2px,transparent 2px 3px);"></div>
<div class="a" style="left:1270px;top:353px;width:1px;height:12px;background:repeating-linear-gradient(to bottom,#b0b0b0 0 2px,transparent 2px 3px);"></div>
<div class="t" style="left:1043.00px;top:353.30px;line-height:12px;font-size:8.27px;color:#222;letter-spacing:-0.276px;">SDA Number</div>
<div class="a" style="left:1038px;top:365px;width:232px;height:12px;background:#dcdcdc;"></div>
<div class="t" style="left:1040.00px;top:365.30px;line-height:12px;font-size:8.48px;color:#222;letter-spacing:-0.223px;">Extents</div>
<svg class="a" style="left:1261px;top:368px;" width="7" height="7" viewBox="0 0 7 7"><path d="M0.8 3.5L3 1.3 5.2 3.5M0.8 6L3 3.8 5.2 6" fill="none" stroke="#222" stroke-width="0.9"/></svg>
<div class="a" style="left:1038px;top:388px;width:232px;height:1px;background:repeating-linear-gradient(to right,#b0b0b0 0 2px,transparent 2px 3px);"></div>
<div class="a" style="left:1150px;top:377px;width:1px;height:12px;background:repeating-linear-gradient(to bottom,#b0b0b0 0 2px,transparent 2px 3px);"></div>
<div class="a" style="left:1262px;top:377px;width:1px;height:12px;background:repeating-linear-gradient(to bottom,#b0b0b0 0 2px,transparent 2px 3px);"></div>
<div class="a" style="left:1270px;top:377px;width:1px;height:12px;background:repeating-linear-gradient(to bottom,#b0b0b0 0 2px,transparent 2px 3px);"></div>
<div class="t" style="left:1043.00px;top:377.30px;line-height:12px;font-size:8.27px;color:#222;letter-spacing:-0.239px;">Crop View</div>
<div class="a" style="left:1152px;top:379px;width:9px;height:9px;background:#fff;border:1px solid #8a8a8a;"></div>
<div class="a" style="left:1038px;top:400px;width:232px;height:1px;background:repeating-linear-gradient(to right,#b0b0b0 0 2px,transparent 2px 3px);"></div>
<div class="a" style="left:1150px;top:389px;width:1px;height:12px;background:repeating-linear-gradient(to bottom,#b0b0b0 0 2px,transparent 2px 3px);"></div>
<div class="a" style="left:1262px;top:389px;width:1px;height:12px;background:repeating-linear-gradient(to bottom,#b0b0b0 0 2px,transparent 2px 3px);"></div>
<div class="a" style="left:1270px;top:389px;width:1px;height:12px;background:repeating-linear-gradient(to bottom,#b0b0b0 0 2px,transparent 2px 3px);"></div>
<div class="t" style="left:1043.00px;top:389.30px;line-height:12px;font-size:8.27px;color:#222;letter-spacing:-0.218px;">Crop Region Visible</div>
<div class="a" style="left:1152px;top:391px;width:9px;height:9px;background:#fff;border:1px solid #8a8a8a;"></div>
<div class="a" style="left:1038px;top:412px;width:232px;height:1px;background:repeating-linear-gradient(to right,#b0b0b0 0 2px,transparent 2px 3px);"></div>
<div class="a" style="left:1150px;top:401px;width:1px;height:12px;background:repeating-linear-gradient(to bottom,#b0b0b0 0 2px,transparent 2px 3px);"></div>
<div class="a" style="left:1262px;top:401px;width:1px;height:12px;background:repeating-linear-gradient(to bottom,#b0b0b0 0 2px,transparent 2px 3px);"></div>
<div class="a" style="left:1270px;top:401px;width:1px;height:12px;background:repeating-linear-gradient(to bottom,#b0b0b0 0 2px,transparent 2px 3px);"></div>
<div class="t" style="left:1043.00px;top:401.30px;line-height:12px;font-size:8.27px;color:#222;letter-spacing:-0.226px;">Annotation Crop</div>
<div class="a" style="left:1152px;top:403px;width:9px;height:9px;background:#fff;border:1px solid #8a8a8a;"></div>
<div class="a" style="left:1038px;top:424px;width:232px;height:1px;background:repeating-linear-gradient(to right,#b0b0b0 0 2px,transparent 2px 3px);"></div>
<div class="a" style="left:1150px;top:413px;width:1px;height:12px;background:repeating-linear-gradient(to bottom,#b0b0b0 0 2px,transparent 2px 3px);"></div>
<div class="a" style="left:1262px;top:413px;width:1px;height:12px;background:repeating-linear-gradient(to bottom,#b0b0b0 0 2px,transparent 2px 3px);"></div>
<div class="a" style="left:1270px;top:413px;width:1px;height:12px;background:repeating-linear-gradient(to bottom,#b0b0b0 0 2px,transparent 2px 3px);"></div>
<div class="t" style="left:1043.00px;top:413.30px;line-height:12px;font-size:8.27px;color:#222;letter-spacing:-0.203px;">Far Clip Active</div>
<div class="a" style="left:1152px;top:415px;width:9px;height:9px;background:#fff;border:1px solid #8a8a8a;"></div>
<div class="a" style="left:1038px;top:436px;width:232px;height:1px;background:repeating-linear-gradient(to right,#b0b0b0 0 2px,transparent 2px 3px);"></div>
<div class="a" style="left:1150px;top:425px;width:1px;height:12px;background:repeating-linear-gradient(to bottom,#b0b0b0 0 2px,transparent 2px 3px);"></div>
<div class="a" style="left:1262px;top:425px;width:1px;height:12px;background:repeating-linear-gradient(to bottom,#b0b0b0 0 2px,transparent 2px 3px);"></div>
<div class="a" style="left:1270px;top:425px;width:1px;height:12px;background:repeating-linear-gradient(to bottom,#b0b0b0 0 2px,transparent 2px 3px);"></div>
<div class="t" style="left:1043.00px;top:425.30px;line-height:12px;font-size:8.27px;color:#909090;letter-spacing:-0.201px;">Far Clip Offset</div>
<div class="t" style="left:1152.00px;top:425.30px;line-height:12px;font-size:8.27px;color:#909090;letter-spacing:-0.202px;">1000&#x27;  0&quot;</div>
<div class="a" style="left:1038px;top:448px;width:232px;height:1px;background:repeating-linear-gradient(to right,#b0b0b0 0 2px,transparent 2px 3px);"></div>
<div class="a" style="left:1150px;top:437px;width:1px;height:12px;background:repeating-linear-gradient(to bottom,#b0b0b0 0 2px,transparent 2px 3px);"></div>
<div class="a" style="left:1262px;top:437px;width:1px;height:12px;background:repeating-linear-gradient(to bottom,#b0b0b0 0 2px,transparent 2px 3px);"></div>
<div class="a" style="left:1270px;top:437px;width:1px;height:12px;background:repeating-linear-gradient(to bottom,#b0b0b0 0 2px,transparent 2px 3px);"></div>
<div class="t" style="left:1043.00px;top:437.30px;line-height:12px;font-size:8.27px;color:#222;letter-spacing:-0.252px;">Scope Box</div>
<div class="t" style="left:1152.00px;top:437.30px;line-height:12px;font-size:8.27px;color:#222;letter-spacing:-0.280px;">None</div>
<div class="a" style="left:1038px;top:460px;width:232px;height:1px;background:repeating-linear-gradient(to right,#b0b0b0 0 2px,transparent 2px 3px);"></div>
<div class="a" style="left:1150px;top:449px;width:1px;height:12px;background:repeating-linear-gradient(to bottom,#b0b0b0 0 2px,transparent 2px 3px);"></div>
<div class="a" style="left:1262px;top:449px;width:1px;height:12px;background:repeating-linear-gradient(to bottom,#b0b0b0 0 2px,transparent 2px 3px);"></div>
<div class="a" style="left:1270px;top:449px;width:1px;height:12px;background:repeating-linear-gradient(to bottom,#b0b0b0 0 2px,transparent 2px 3px);"></div>
<div class="t" style="left:1043.00px;top:449.30px;line-height:12px;font-size:8.27px;color:#222;letter-spacing:-0.227px;">Section Box</div>
<div class="a" style="left:1152px;top:451px;width:9px;height:9px;background:#fff;border:1px solid #8a8a8a;"></div>
<svg class="a" style="left:1153px;top:452px;" width="8" height="8" viewBox="0 0 8 8"><path d="M1 4l2 2.5L7 1.5" fill="none" stroke="#222" stroke-width="1"/></svg>
<div class="a" style="left:1038px;top:461px;width:232px;height:12px;background:#dcdcdc;"></div>
<div class="t" style="left:1040.00px;top:461.30px;line-height:12px;font-size:8.48px;color:#222;letter-spacing:-0.278px;">Camera</div>
<svg class="a" style="left:1261px;top:464px;" width="7" height="7" viewBox="0 0 7 7"><path d="M0.8 3.5L3 1.3 5.2 3.5M0.8 6L3 3.8 5.2 6" fill="none" stroke="#222" stroke-width="0.9"/></svg>
<div class="a" style="left:1038px;top:484px;width:232px;height:1px;background:repeating-linear-gradient(to right,#b0b0b0 0 2px,transparent 2px 3px);"></div>
<div class="a" style="left:1150px;top:473px;width:1px;height:12px;background:repeating-linear-gradient(to bottom,#b0b0b0 0 2px,transparent 2px 3px);"></div>
<div class="a" style="left:1262px;top:473px;width:1px;height:12px;background:repeating-linear-gradient(to bottom,#b0b0b0 0 2px,transparent 2px 3px);"></div>
<div class="a" style="left:1270px;top:473px;width:1px;height:12px;background:repeating-linear-gradient(to bottom,#b0b0b0 0 2px,transparent 2px 3px);"></div>
<div class="t" style="left:1043.00px;top:473.30px;line-height:12px;font-size:8.27px;color:#222;letter-spacing:-0.221px;">Rendering Settings</div>
<div class="a" style="left:1151px;top:474px;width:111px;height:10px;background:#e1e1e1;border:1px solid #b8b8b8;"></div>
<div class="t" style="left:1196.53px;top:473.30px;line-height:12px;font-size:8.27px;color:#222;letter-spacing:-0.171px;">Edit...</div>
<div class="a" style="left:1038px;top:496px;width:232px;height:1px;background:repeating-linear-gradient(to right,#b0b0b0 0 2px,transparent 2px 3px);"></div>
<div class="a" style="left:1150px;top:485px;width:1px;height:12px;background:repeating-linear-gradient(to bottom,#b0b0b0 0 2px,transparent 2px 3px);"></div>
<div class="a" style="left:1262px;top:485px;width:1px;height:12px;background:repeating-linear-gradient(to bottom,#b0b0b0 0 2px,transparent 2px 3px);"></div>
<div class="a" style="left:1270px;top:485px;width:1px;height:12px;background:repeating-linear-gradient(to bottom,#b0b0b0 0 2px,transparent 2px 3px);"></div>
<div class="t" style="left:1043.00px;top:485.30px;line-height:12px;font-size:8.27px;color:#909090;letter-spacing:-0.219px;">Locked Orientation</div>
<div class="a" style="left:1152px;top:487px;width:9px;height:9px;background:#fff;border:1px solid #8a8a8a;opacity:0.4;"></div>
<div class="a" style="left:1038px;top:508px;width:232px;height:1px;background:repeating-linear-gradient(to right,#b0b0b0 0 2px,transparent 2px 3px);"></div>
<div class="a" style="left:1150px;top:497px;width:1px;height:12px;background:repeating-linear-gradient(to bottom,#b0b0b0 0 2px,transparent 2px 3px);"></div>
<div class="a" style="left:1262px;top:497px;width:1px;height:12px;background:repeating-linear-gradient(to bottom,#b0b0b0 0 2px,transparent 2px 3px);"></div>
<div class="a" style="left:1270px;top:497px;width:1px;height:12px;background:repeating-linear-gradient(to bottom,#b0b0b0 0 2px,transparent 2px 3px);"></div>
<div class="t" style="left:1043.00px;top:497.30px;line-height:12px;font-size:8.27px;color:#222;letter-spacing:-0.226px;">Projection Mode</div>
<div class="t" style="left:1152.00px;top:497.30px;line-height:12px;font-size:8.27px;color:#222;letter-spacing:-0.226px;">Orthographic</div>
<div class="a" style="left:1038px;top:520px;width:232px;height:1px;background:repeating-linear-gradient(to right,#b0b0b0 0 2px,transparent 2px 3px);"></div>
<div class="a" style="left:1150px;top:509px;width:1px;height:12px;background:repeating-linear-gradient(to bottom,#b0b0b0 0 2px,transparent 2px 3px);"></div>
<div class="a" style="left:1262px;top:509px;width:1px;height:12px;background:repeating-linear-gradient(to bottom,#b0b0b0 0 2px,transparent 2px 3px);"></div>
<div class="a" style="left:1270px;top:509px;width:1px;height:12px;background:repeating-linear-gradient(to bottom,#b0b0b0 0 2px,transparent 2px 3px);"></div>
<div class="t" style="left:1043.00px;top:509.30px;line-height:12px;font-size:8.27px;color:#222;letter-spacing:-0.220px;">Eye Elevation</div>
<div class="t" style="left:1152.00px;top:509.30px;line-height:12px;font-size:8.27px;color:#222;letter-spacing:-0.208px;">350&#x27;  6 67/128&quot;</div>
<div class="a" style="left:1038px;top:532px;width:232px;height:1px;background:repeating-linear-gradient(to right,#b0b0b0 0 2px,transparent 2px 3px);"></div>
<div class="a" style="left:1150px;top:521px;width:1px;height:12px;background:repeating-linear-gradient(to bottom,#b0b0b0 0 2px,transparent 2px 3px);"></div>
<div class="a" style="left:1262px;top:521px;width:1px;height:12px;background:repeating-linear-gradient(to bottom,#b0b0b0 0 2px,transparent 2px 3px);"></div>
<div class="a" style="left:1270px;top:521px;width:1px;height:12px;background:repeating-linear-gradient(to bottom,#b0b0b0 0 2px,transparent 2px 3px);"></div>
<div class="t" style="left:1043.00px;top:521.30px;line-height:12px;font-size:8.27px;color:#222;letter-spacing:-0.210px;">Target Elevation</div>
<div class="t" style="left:1152.00px;top:521.30px;line-height:12px;font-size:8.27px;color:#222;letter-spacing:-0.205px;">-268&#x27;  0 47/256&quot;</div>
<div class="a" style="left:1038px;top:544px;width:232px;height:1px;background:repeating-linear-gradient(to right,#b0b0b0 0 2px,transparent 2px 3px);"></div>
<div class="a" style="left:1150px;top:533px;width:1px;height:12px;background:repeating-linear-gradient(to bottom,#b0b0b0 0 2px,transparent 2px 3px);"></div>
<div class="a" style="left:1262px;top:533px;width:1px;height:12px;background:repeating-linear-gradient(to bottom,#b0b0b0 0 2px,transparent 2px 3px);"></div>
<div class="a" style="left:1270px;top:533px;width:1px;height:12px;background:repeating-linear-gradient(to bottom,#b0b0b0 0 2px,transparent 2px 3px);"></div>
<div class="t" style="left:1043.00px;top:533.30px;line-height:12px;font-size:8.27px;color:#909090;letter-spacing:-0.231px;">Camera Position</div>
<div class="t" style="left:1152.00px;top:533.30px;line-height:12px;font-size:8.27px;color:#909090;letter-spacing:-0.214px;">Adjusting</div>
<div class="a" style="left:1038px;top:545px;width:232px;height:12px;background:#dcdcdc;"></div>
<div class="t" style="left:1040.00px;top:545.30px;line-height:12px;font-size:8.48px;color:#222;letter-spacing:-0.202px;">Identity Data</div>
<svg class="a" style="left:1261px;top:548px;" width="7" height="7" viewBox="0 0 7 7"><path d="M0.8 3.5L3 1.3 5.2 3.5M0.8 6L3 3.8 5.2 6" fill="none" stroke="#222" stroke-width="0.9"/></svg>
<div class="a" style="left:1038px;top:568px;width:232px;height:1px;background:repeating-linear-gradient(to right,#b0b0b0 0 2px,transparent 2px 3px);"></div>
<div class="a" style="left:1150px;top:557px;width:1px;height:12px;background:repeating-linear-gradient(to bottom,#b0b0b0 0 2px,transparent 2px 3px);"></div>
<div class="a" style="left:1262px;top:557px;width:1px;height:12px;background:repeating-linear-gradient(to bottom,#b0b0b0 0 2px,transparent 2px 3px);"></div>
<div class="a" style="left:1270px;top:557px;width:1px;height:12px;background:repeating-linear-gradient(to bottom,#b0b0b0 0 2px,transparent 2px 3px);"></div>
<div class="t" style="left:1043.00px;top:557.30px;line-height:12px;font-size:8.27px;color:#222;letter-spacing:-0.234px;">View Template</div>
<div class="a" style="left:1151px;top:558px;width:111px;height:10px;background:#e1e1e1;border:1px solid #b8b8b8;"></div>
<div class="t" style="left:1192.63px;top:557.30px;line-height:12px;font-size:8.27px;color:#222;letter-spacing:-0.278px;">&lt;None&gt;</div>
<div class="a" style="left:1038px;top:580px;width:232px;height:1px;background:repeating-linear-gradient(to right,#b0b0b0 0 2px,transparent 2px 3px);"></div>
<div class="a" style="left:1150px;top:569px;width:1px;height:12px;background:repeating-linear-gradient(to bottom,#b0b0b0 0 2px,transparent 2px 3px);"></div>
<div class="a" style="left:1262px;top:569px;width:1px;height:12px;background:repeating-linear-gradient(to bottom,#b0b0b0 0 2px,transparent 2px 3px);"></div>
<div class="a" style="left:1270px;top:569px;width:1px;height:12px;background:repeating-linear-gradient(to bottom,#b0b0b0 0 2px,transparent 2px 3px);"></div>
<div class="t" style="left:1043.00px;top:569.30px;line-height:12px;font-size:8.27px;color:#222;letter-spacing:-0.265px;">View Name</div>
<div class="t" style="left:1152.00px;top:569.30px;line-height:12px;font-size:8.27px;color:#222;letter-spacing:-0.261px;">EBD_Color</div>
<div class="a" style="left:1038px;top:592px;width:232px;height:1px;background:repeating-linear-gradient(to right,#b0b0b0 0 2px,transparent 2px 3px);"></div>
<div class="a" style="left:1150px;top:581px;width:1px;height:12px;background:repeating-linear-gradient(to bottom,#b0b0b0 0 2px,transparent 2px 3px);"></div>
<div class="a" style="left:1262px;top:581px;width:1px;height:12px;background:repeating-linear-gradient(to bottom,#b0b0b0 0 2px,transparent 2px 3px);"></div>
<div class="a" style="left:1270px;top:581px;width:1px;height:12px;background:repeating-linear-gradient(to bottom,#b0b0b0 0 2px,transparent 2px 3px);"></div>
<div class="t" style="left:1043.00px;top:581.30px;line-height:12px;font-size:8.27px;color:#909090;letter-spacing:-0.263px;">Dependency</div>
<div class="t" style="left:1152.00px;top:581.30px;line-height:12px;font-size:8.27px;color:#909090;letter-spacing:-0.237px;">Independent</div>
<div class="a" style="left:1038px;top:604px;width:232px;height:1px;background:repeating-linear-gradient(to right,#b0b0b0 0 2px,transparent 2px 3px);"></div>
<div class="a" style="left:1150px;top:593px;width:1px;height:12px;background:repeating-linear-gradient(to bottom,#b0b0b0 0 2px,transparent 2px 3px);"></div>
<div class="a" style="left:1262px;top:593px;width:1px;height:12px;background:repeating-linear-gradient(to bottom,#b0b0b0 0 2px,transparent 2px 3px);"></div>
<div class="a" style="left:1270px;top:593px;width:1px;height:12px;background:repeating-linear-gradient(to bottom,#b0b0b0 0 2px,transparent 2px 3px);"></div>
<div class="t" style="left:1043.00px;top:593.30px;line-height:12px;font-size:8.27px;color:#222;letter-spacing:-0.205px;">Title on Sheet</div>
<div class="a" style="left:1038px;top:616px;width:232px;height:1px;background:repeating-linear-gradient(to right,#b0b0b0 0 2px,transparent 2px 3px);"></div>
<div class="a" style="left:1150px;top:605px;width:1px;height:12px;background:repeating-linear-gradient(to bottom,#b0b0b0 0 2px,transparent 2px 3px);"></div>
<div class="a" style="left:1262px;top:605px;width:1px;height:12px;background:repeating-linear-gradient(to bottom,#b0b0b0 0 2px,transparent 2px 3px);"></div>
<div class="a" style="left:1270px;top:605px;width:1px;height:12px;background:repeating-linear-gradient(to bottom,#b0b0b0 0 2px,transparent 2px 3px);"></div>
<div class="t" style="left:1043.00px;top:605.30px;line-height:12px;font-size:8.27px;color:#909090;letter-spacing:-0.244px;">Workset</div>
<div class="t" style="left:1152.00px;top:605.30px;line-height:12px;font-size:8.27px;color:#909090;letter-spacing:-0.233px;">View &quot;3D View: EBD_Color&quot;</div>
<div class="a" style="left:1038px;top:628px;width:232px;height:1px;background:repeating-linear-gradient(to right,#b0b0b0 0 2px,transparent 2px 3px);"></div>
<div class="a" style="left:1150px;top:617px;width:1px;height:12px;background:repeating-linear-gradient(to bottom,#b0b0b0 0 2px,transparent 2px 3px);"></div>
<div class="a" style="left:1262px;top:617px;width:1px;height:12px;background:repeating-linear-gradient(to bottom,#b0b0b0 0 2px,transparent 2px 3px);"></div>
<div class="a" style="left:1270px;top:617px;width:1px;height:12px;background:repeating-linear-gradient(to bottom,#b0b0b0 0 2px,transparent 2px 3px);"></div>
<div class="t" style="left:1043.00px;top:617.30px;line-height:12px;font-size:8.27px;color:#909090;letter-spacing:-0.217px;">Edited by</div>
<div class="t" style="left:1152.00px;top:617.30px;line-height:12px;font-size:8.27px;color:#909090;letter-spacing:-0.222px;">emily.bisaga.dunne</div>
<div class="a" style="left:1038px;top:629px;width:232px;height:12px;background:#dcdcdc;"></div>
<div class="t" style="left:1040.00px;top:629.30px;line-height:12px;font-size:8.48px;color:#222;letter-spacing:-0.242px;">Phasing</div>
<svg class="a" style="left:1261px;top:632px;" width="7" height="7" viewBox="0 0 7 7"><path d="M0.8 3.5L3 1.3 5.2 3.5M0.8 6L3 3.8 5.2 6" fill="none" stroke="#222" stroke-width="0.9"/></svg>
<div class="a" style="left:1038px;top:652px;width:232px;height:1px;background:repeating-linear-gradient(to right,#b0b0b0 0 2px,transparent 2px 3px);"></div>
<div class="a" style="left:1150px;top:641px;width:1px;height:12px;background:repeating-linear-gradient(to bottom,#b0b0b0 0 2px,transparent 2px 3px);"></div>
<div class="a" style="left:1262px;top:641px;width:1px;height:12px;background:repeating-linear-gradient(to bottom,#b0b0b0 0 2px,transparent 2px 3px);"></div>
<div class="a" style="left:1270px;top:641px;width:1px;height:12px;background:repeating-linear-gradient(to bottom,#b0b0b0 0 2px,transparent 2px 3px);"></div>
<div class="t" style="left:1043.00px;top:641.30px;line-height:12px;font-size:8.27px;color:#222;letter-spacing:-0.208px;">Phase Filter</div>
<div class="t" style="left:1152.00px;top:641.30px;line-height:12px;font-size:8.27px;color:#222;letter-spacing:-0.255px;">Show Complete</div>
<div class="a" style="left:1038px;top:664px;width:232px;height:1px;background:repeating-linear-gradient(to right,#b0b0b0 0 2px,transparent 2px 3px);"></div>
<div class="a" style="left:1150px;top:653px;width:1px;height:12px;background:repeating-linear-gradient(to bottom,#b0b0b0 0 2px,transparent 2px 3px);"></div>
<div class="a" style="left:1262px;top:653px;width:1px;height:12px;background:repeating-linear-gradient(to bottom,#b0b0b0 0 2px,transparent 2px 3px);"></div>
<div class="a" style="left:1270px;top:653px;width:1px;height:12px;background:repeating-linear-gradient(to bottom,#b0b0b0 0 2px,transparent 2px 3px);"></div>
<div class="t" style="left:1043.00px;top:653.30px;line-height:12px;font-size:8.27px;color:#222;letter-spacing:-0.266px;">Phase</div>
<div class="t" style="left:1152.00px;top:653.30px;line-height:12px;font-size:8.27px;color:#222;letter-spacing:-0.208px;">TI</div>
<div class="a" style="left:1038px;top:665px;width:232px;height:12px;background:#dcdcdc;"></div>
<div class="t" style="left:1040.00px;top:665.30px;line-height:12px;font-size:8.48px;color:#222;letter-spacing:-0.234px;">Other</div>
<svg class="a" style="left:1261px;top:668px;" width="7" height="7" viewBox="0 0 7 7"><path d="M0.8 3.5L3 1.3 5.2 3.5M0.8 6L3 3.8 5.2 6" fill="none" stroke="#222" stroke-width="0.9"/></svg>
<div class="a" style="left:1150px;top:677px;width:1px;height:7px;background:repeating-linear-gradient(to bottom,#b0b0b0 0 2px,transparent 2px 3px);"></div>
<div class="a" style="left:1262px;top:677px;width:1px;height:7px;background:repeating-linear-gradient(to bottom,#b0b0b0 0 2px,transparent 2px 3px);"></div>
<div class="a" style="left:1270px;top:677px;width:1px;height:7px;background:repeating-linear-gradient(to bottom,#b0b0b0 0 2px,transparent 2px 3px);"></div>
<div class="t" style="left:1043.00px;top:677.30px;line-height:12px;font-size:8.27px;color:#222;letter-spacing:-0.205px;">View Classification</div>
<div class="a" style="left:1271px;top:197px;width:9px;height:487px;background:#f0f0f0;"></div>
<svg class="a" style="left:1272px;top:200px;" width="8" height="5" viewBox="0 0 8 5"><path d="M0.5 4.5L4 1l3.5 3.5" fill="none" stroke="#333"/></svg>
<div class="a" style="left:1271px;top:209px;width:9px;height:434px;background:#c8c8c8;"></div>
<div class="a" style="left:1264px;top:354px;width:6px;height:12px;background:#f4f4f4;border:1px solid #aaa;border-radius:1px;"></div>
<div class="a" style="left:1263px;top:677px;width:7px;height:8px;background:#fff;border:1px solid #bbb;border-bottom:none;"></div>
<svg class="a" style="left:1272px;top:677px;" width="8" height="5" viewBox="0 0 8 5"><path d="M0.5 0.5L4 4l3.5-3.5" fill="none" stroke="#333"/></svg>
<div class="t" style="left:1040.00px;top:686.90px;line-height:12px;font-size:8.48px;color:#1f5fbf;letter-spacing:-0.331px;text-decoration:underline;">Properties help</div>
<div class="a" style="left:1232px;top:685px;width:48px;height:14px;background:#dedede;border:1px solid #c8c8c8;"></div>
<div class="t" style="left:1245.99px;top:686.90px;line-height:12px;font-size:8.48px;color:#8a8a8a;letter-spacing:-0.235px;">Apply</div>
<div class="a" style="left:2px;top:702px;width:1278px;height:17px;background:#cccccc;"></div>
<div class="t" style="left:5.00px;top:704.90px;line-height:12px;font-size:8.48px;color:#222;letter-spacing:-0.696px;">Ready</div>
<div class="a" style="left:600px;top:704px;width:128px;height:13px;background:#e6e6e6;border:1px solid #bdbdbd;"></div>
<div class="t" style="left:604.00px;top:705.90px;line-height:11px;font-size:7.95px;color:#777;letter-spacing:-0.202px;">Workset1 (Not Editable)</div>
<svg class="a" style="left:742px;top:704px;" width="20" height="12" viewBox="0 0 20 12"><rect x="1" y="1" width="8" height="10" fill="#777"/></svg>
<div class="t" style="left:748.00px;top:705.90px;line-height:11px;font-size:7.95px;color:#222;letter-spacing:-0.182px;">:0</div>
<div class="a" style="left:762px;top:704px;width:10px;height:12px;background:#888;"></div>
<svg class="a" style="left:770px;top:704px;" width="12" height="12" viewBox="0 0 12 12"><rect x="1" y="1" width="10" height="10" fill="none" stroke="#666"/></svg>
<div class="a" style="left:785px;top:704px;width:150px;height:13px;background:#ececec;border:1px solid #c8c8c8;"></div>
<div class="t" style="left:790.00px;top:705.90px;line-height:11px;font-size:7.95px;color:#888;letter-spacing:-0.226px;">Main Model</div>
<svg class="a" style="left:1090px;top:703px;" width="110" height="14" viewBox="0 0 110 14"><path d="M2 3h7v6l-3 3H2z" fill="#8a8a8a"/><path d="M22 11l5-8 5 8z" fill="#888"/><path d="M42 2h5v3h3v6h-8z" fill="#888"/><path d="M62 3h8v9h-8z" fill="#888"/><path d="M83 4l6 6M86 3l5 5" stroke="#999" stroke-width="1.5"/><circle cx="106" cy="7.5" r="4" fill="none" stroke="#aaa" stroke-width="2"/></svg>
<svg class="a" style="left:1190px;top:703px;" width="9" height="13" viewBox="0 0 9 13"><path d="M0.5 1.5h8l-3 4.5v6l-2-1.5V6z" fill="none" stroke="#333" stroke-width="1.2"/></svg>
<div class="t" style="left:1201.50px;top:704.90px;line-height:12px;font-size:8.48px;color:#222;letter-spacing:-0.195px;">:0</div>
<div class="a" style="left:0px;top:718.5px;width:1280px;height:1.5px;background:#111;"></div>
<div class="a" style="left:0px;top:0px;width:2px;height:720px;background:#253030;"></div>
<div class="a" style="left:2px;top:0px;width:2px;height:720px;background:linear-gradient(to right,rgba(0,0,0,0.12),rgba(0,0,0,0));"></div>
<div class="a" style="left:188px;top:563px;width:904px;height:153px;background:rgba(0,0,0,0.77);border-radius:6px;"></div>
<div class="t" style="left:193.00px;top:565.80px;line-height:55px;font-size:41px;color:#ffffff;letter-spacing:0.836px;-webkit-text-stroke:0.6px #fff;">– but first we’re going to check under manage&gt;</div>
<div class="t" style="left:193.00px;top:612.90px;line-height:55px;font-size:41px;color:#ffffff;letter-spacing:0.822px;-webkit-text-stroke:0.6px #fff;">materials&gt; that we are indeed using a model</div>
<div class="t" style="left:193.00px;top:659.60px;line-height:55px;font-size:41px;color:#ffffff;letter-spacing:0.753px;-webkit-text-stroke:0.6px #fff;">pattern type as this type is required</div>
</body></html>
